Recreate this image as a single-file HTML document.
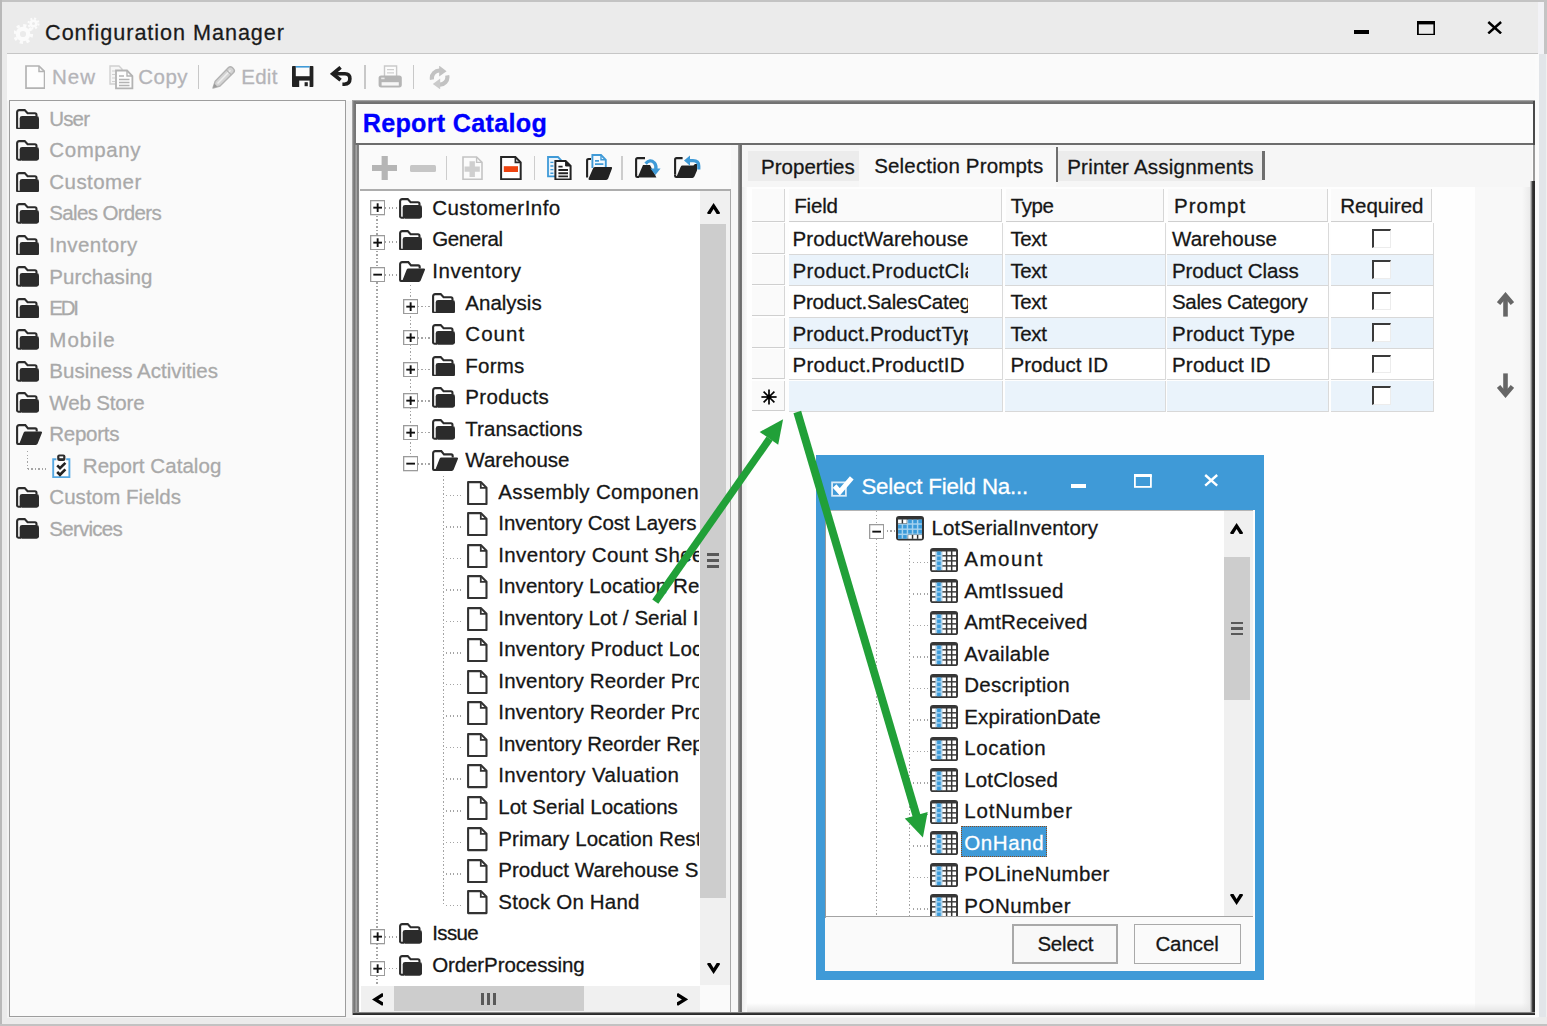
<!DOCTYPE html>
<html lang="en"><head><meta charset="utf-8"><title>Configuration Manager</title>
<style>
html,body{margin:0;padding:0}
body{width:1547px;height:1026px;overflow:hidden;position:relative;background:#ebebeb;font-family:"Liberation Sans",sans-serif}
.a{position:absolute;display:block}
.t{position:absolute;white-space:pre;display:block;-webkit-text-stroke:0.28px currentColor}
</style></head><body>
<div class="a" style="left:0.00px;top:0.00px;width:1547.00px;height:1.60px;background:#c3c3c3;"></div><div class="a" style="left:0.00px;top:0.00px;width:1.60px;height:1026.00px;background:#b9b9b9;"></div><div class="a" style="left:0.00px;top:1024.00px;width:1547.00px;height:2.00px;background:#c2c2c2;"></div><div class="a" style="left:1538.00px;top:1.60px;width:5.50px;height:52.00px;background:#f2f2f6;"></div><div class="a" style="left:1543.50px;top:0.00px;width:3.50px;height:54.00px;background:#c4c4c4;"></div><div class="a" style="left:7.00px;top:54.00px;width:1531.00px;height:46.50px;background:#fafafa;"></div><div class="a" style="left:7.00px;top:100.50px;width:1531.00px;height:917.00px;background:#f3f3f3;"></div><div class="a" style="left:1539.20px;top:54.00px;width:6.40px;height:962.80px;background:#e2e5e9;"></div><div class="a" style="left:1545.60px;top:54.00px;width:1.40px;height:963.00px;background:#f0f0f0;"></div><div class="a" style="left:1534.60px;top:54.00px;width:4.60px;height:963.00px;background:#fbfbfb;"></div><div class="a" style="left:7.00px;top:52.60px;width:1531.00px;height:1.50px;background:#c6c6c6;"></div><svg class="a" style="left:14.20px;top:16.60px;" width="28.00" height="30.00" viewBox="0 0 28 30"><g fill="none" stroke="#fbfbfb"><circle cx="9" cy="17" r="5.2" stroke-width="4.2"/><circle cx="9" cy="17" r="8.6" stroke-width="3" stroke-dasharray="3.2 3.55"/><circle cx="19.5" cy="6.5" r="2.8" stroke-width="2.6"/><circle cx="19.5" cy="6.5" r="5" stroke-width="2" stroke-dasharray="2 1.93"/></g></svg><span class="t" style="left:45.10px;top:22.22px;font-size:21.6px;line-height:21.6px;color:#1a1a1a;letter-spacing:0.961px;">Configuration Manager</span><div class="a" style="left:1354.00px;top:29.60px;width:14.60px;height:4.00px;background:#000;"></div><svg class="a" style="left:1417.00px;top:20.60px;" width="18.20" height="14.60" viewBox="0 0 18.2 14.6"><rect x="0.9" y="2" width="16.4" height="11.7" fill="none" stroke="#000" stroke-width="1.8"/><rect x="0" y="0" width="18.2" height="3.4" fill="#000"/></svg><svg class="a" style="left:1487.00px;top:20.50px;" width="15.40" height="13.40" viewBox="0 0 15.4 13.4"><path d="M1.3 1L14.1 12.4M14.1 1L1.3 12.4" stroke="#000" stroke-width="2.5" fill="none"/></svg><svg class="a" style="left:24.50px;top:64.60px;" width="20.60" height="24.20" viewBox="0 0 20.6 24.2"><path d="M1 1H14L19.6 6.6V23.2H1Z" fill="#fdfdfd" stroke="#b3b3b3" stroke-width="1.7"/><path d="M14 1V6.6H19.6" fill="none" stroke="#b3b3b3" stroke-width="1.5"/></svg><span class="t" style="left:51.90px;top:66.95px;font-size:20.5px;line-height:20.5px;color:#b4b4b8;letter-spacing:1.042px;">New</span><svg class="a" style="left:109.40px;top:65.20px;" width="24.60" height="24.60" viewBox="0 0 24.6 24.6"><path d="M1 1H10L13 4V19H1Z" fill="#f6f6f6" stroke="#d0d0d0" stroke-width="1.4"/><path d="M3 6H6M3 9.5H6M3 13H6M3 16.5H6" stroke="#d0d0d0" stroke-width="1.2"/><path d="M7 5.5H18L23.4 11V23.3H7Z" fill="#fdfdfd" stroke="#b3b3b3" stroke-width="1.8"/><path d="M18 5.5V11H23.4" fill="none" stroke="#b3b3b3" stroke-width="1.4"/><path d="M10 11H15M10 14.5H20.5M10 17.5H20.5M10 20.5H20.5" stroke="#b3b3b3" stroke-width="1.7"/></svg><span class="t" style="left:138.20px;top:66.95px;font-size:20.5px;line-height:20.5px;color:#b4b4b8;letter-spacing:0.514px;">Copy</span><div class="a" style="left:197.80px;top:64.50px;width:1.30px;height:24.30px;background:#c8c8c8;"></div><svg class="a" style="left:210.50px;top:63.60px;" width="26.00" height="26.00" viewBox="0 0 26 26"><path d="M2 24L4.2 17.2L17.5 3.6Q19.3 1.8 21.3 3.6L22.6 4.9Q24.3 6.8 22.6 8.6L9 22Z" fill="#d4d4d4" stroke="#b3b3b3" stroke-width="1.4" stroke-linejoin="round"/><path d="M6.5 19.5L19.5 6.3" stroke="#eee" stroke-width="1.6"/><path d="M2 24L3.4 19.6L6.4 22.6Z" fill="#9a9a9a"/><path d="M15.3 5.8L20.4 10.9" stroke="#b3b3b3" stroke-width="1.2"/></svg><span class="t" style="left:241.20px;top:66.95px;font-size:20.5px;line-height:20.5px;color:#b4b4b8;letter-spacing:0.291px;">Edit</span><svg class="a" style="left:292.20px;top:66.40px;" width="21.40" height="21.00" viewBox="0 0 21.4 21"><rect x="0" y="0" width="21.4" height="21" rx="0.8" fill="#222"/><rect x="3.8" y="0" width="13.8" height="10.2" fill="#fbfbfb"/><rect x="3.8" y="0" width="13.8" height="1.6" fill="#3f9ad7"/><rect x="7.2" y="14.6" width="10.4" height="6.6" fill="#fbfbfb"/><rect x="12.6" y="16.2" width="3.2" height="4" fill="#222"/></svg><svg class="a" style="left:330.40px;top:66.20px;" width="22.40" height="20.40" viewBox="0 0 22.4 20.4"><path d="M10.6 1.4L2.8 7.8L10.6 14.2" fill="none" stroke="#1e1e1e" stroke-width="3.7" stroke-linejoin="miter"/><path d="M4 7.8H15Q19.9 7.8 19.9 12.8Q19.9 18.2 14.4 18.2H12.4" fill="none" stroke="#1e1e1e" stroke-width="3.6"/></svg><div class="a" style="left:364.30px;top:64.80px;width:1.30px;height:24.00px;background:#c8c8c8;"></div><svg class="a" style="left:378.00px;top:64.60px;" width="24.40" height="23.00" viewBox="0 0 24.4 23"><path d="M6.5 11V1H18.6V11" fill="#fcfcfc" stroke="#c9c9c9" stroke-width="1.4"/><path d="M9 4.6H16M9 7.8H16" stroke="#cfcfcf" stroke-width="1.3"/><rect x="0.6" y="10.4" width="23.2" height="12" rx="2.6" fill="#b5b5b5"/><rect x="3.6" y="17.2" width="17.2" height="3.4" fill="#f6f6f6"/><rect x="3.2" y="12.6" width="3.4" height="1.6" fill="#e8e8e8"/></svg><div class="a" style="left:413.20px;top:64.80px;width:1.30px;height:24.00px;background:#c8c8c8;"></div><svg class="a" style="left:428.60px;top:66.20px;" width="21.40" height="22.60" viewBox="0 0 21.4 22.6"><g fill="none" stroke="#c2c2c2" stroke-width="4.2"><path d="M3 13.6A7.6 7.6 0 0 1 11.6 4.6"/><path d="M18.2 9.4A7.6 7.6 0 0 1 9.6 18.6"/></g><path d="M10.2 -0.4L17.6 5.2L10.2 10.6Z" fill="#c2c2c2"/><path d="M11.2 12.6L3.8 18L11.2 23.4Z" fill="#cbcbcb"/></svg><div class="a" style="left:9.30px;top:100.00px;width:336.50px;height:917.00px;background:#fafafa;box-sizing:border-box;border:1.5px solid #9d9d9d;"></div><svg class="a" style="left:16.00px;top:108.50px;" width="23.20" height="20.80" viewBox="0 0 23.2 20.8"><path d="M1.1 18.4V3.3Q1.1 1.1 3.3 1.1H8.7L11.6 4.3H18.9Q20.5 4.3 20.5 5.9V7" fill="none" stroke="#2b2b2b" stroke-width="2.1"/><path d="M1.1 18V18.6Q1.1 19.7 2.4 19.7H5" fill="none" stroke="#2b2b2b" stroke-width="2.1"/><rect x="3.7" y="7.1" width="19.3" height="13.6" rx="2.4" fill="#2b2b2b"/></svg><span class="t" style="left:49.30px;top:108.85px;font-size:20.5px;line-height:20.5px;color:#a9a9a9;letter-spacing:-0.866px;">User</span><svg class="a" style="left:16.00px;top:140.03px;" width="23.20" height="20.80" viewBox="0 0 23.2 20.8"><path d="M1.1 18.4V3.3Q1.1 1.1 3.3 1.1H8.7L11.6 4.3H18.9Q20.5 4.3 20.5 5.9V7" fill="none" stroke="#2b2b2b" stroke-width="2.1"/><path d="M1.1 18V18.6Q1.1 19.7 2.4 19.7H5" fill="none" stroke="#2b2b2b" stroke-width="2.1"/><rect x="3.7" y="7.1" width="19.3" height="13.6" rx="2.4" fill="#2b2b2b"/></svg><span class="t" style="left:49.30px;top:140.38px;font-size:20.5px;line-height:20.5px;color:#a9a9a9;letter-spacing:0.592px;">Company</span><svg class="a" style="left:16.00px;top:171.56px;" width="23.20" height="20.80" viewBox="0 0 23.2 20.8"><path d="M1.1 18.4V3.3Q1.1 1.1 3.3 1.1H8.7L11.6 4.3H18.9Q20.5 4.3 20.5 5.9V7" fill="none" stroke="#2b2b2b" stroke-width="2.1"/><path d="M1.1 18V18.6Q1.1 19.7 2.4 19.7H5" fill="none" stroke="#2b2b2b" stroke-width="2.1"/><rect x="3.7" y="7.1" width="19.3" height="13.6" rx="2.4" fill="#2b2b2b"/></svg><span class="t" style="left:49.30px;top:171.91px;font-size:20.5px;line-height:20.5px;color:#a9a9a9;letter-spacing:0.449px;">Customer</span><svg class="a" style="left:16.00px;top:203.09px;" width="23.20" height="20.80" viewBox="0 0 23.2 20.8"><path d="M1.1 18.4V3.3Q1.1 1.1 3.3 1.1H8.7L11.6 4.3H18.9Q20.5 4.3 20.5 5.9V7" fill="none" stroke="#2b2b2b" stroke-width="2.1"/><path d="M1.1 18V18.6Q1.1 19.7 2.4 19.7H5" fill="none" stroke="#2b2b2b" stroke-width="2.1"/><rect x="3.7" y="7.1" width="19.3" height="13.6" rx="2.4" fill="#2b2b2b"/></svg><span class="t" style="left:49.30px;top:203.44px;font-size:20.5px;line-height:20.5px;color:#a9a9a9;letter-spacing:-0.649px;">Sales Orders</span><svg class="a" style="left:16.00px;top:234.62px;" width="23.20" height="20.80" viewBox="0 0 23.2 20.8"><path d="M1.1 18.4V3.3Q1.1 1.1 3.3 1.1H8.7L11.6 4.3H18.9Q20.5 4.3 20.5 5.9V7" fill="none" stroke="#2b2b2b" stroke-width="2.1"/><path d="M1.1 18V18.6Q1.1 19.7 2.4 19.7H5" fill="none" stroke="#2b2b2b" stroke-width="2.1"/><rect x="3.7" y="7.1" width="19.3" height="13.6" rx="2.4" fill="#2b2b2b"/></svg><span class="t" style="left:49.30px;top:234.97px;font-size:20.5px;line-height:20.5px;color:#a9a9a9;letter-spacing:0.446px;">Inventory</span><svg class="a" style="left:16.00px;top:266.15px;" width="23.20" height="20.80" viewBox="0 0 23.2 20.8"><path d="M1.1 18.4V3.3Q1.1 1.1 3.3 1.1H8.7L11.6 4.3H18.9Q20.5 4.3 20.5 5.9V7" fill="none" stroke="#2b2b2b" stroke-width="2.1"/><path d="M1.1 18V18.6Q1.1 19.7 2.4 19.7H5" fill="none" stroke="#2b2b2b" stroke-width="2.1"/><rect x="3.7" y="7.1" width="19.3" height="13.6" rx="2.4" fill="#2b2b2b"/></svg><span class="t" style="left:49.30px;top:266.50px;font-size:20.5px;line-height:20.5px;color:#a9a9a9;letter-spacing:0.060px;">Purchasing</span><svg class="a" style="left:16.00px;top:297.68px;" width="23.20" height="20.80" viewBox="0 0 23.2 20.8"><path d="M1.1 18.4V3.3Q1.1 1.1 3.3 1.1H8.7L11.6 4.3H18.9Q20.5 4.3 20.5 5.9V7" fill="none" stroke="#2b2b2b" stroke-width="2.1"/><path d="M1.1 18V18.6Q1.1 19.7 2.4 19.7H5" fill="none" stroke="#2b2b2b" stroke-width="2.1"/><rect x="3.7" y="7.1" width="19.3" height="13.6" rx="2.4" fill="#2b2b2b"/></svg><span class="t" style="left:49.30px;top:298.03px;font-size:20.5px;line-height:20.5px;color:#a9a9a9;letter-spacing:-2.244px;">EDI</span><svg class="a" style="left:16.00px;top:329.21px;" width="23.20" height="20.80" viewBox="0 0 23.2 20.8"><path d="M1.1 18.4V3.3Q1.1 1.1 3.3 1.1H8.7L11.6 4.3H18.9Q20.5 4.3 20.5 5.9V7" fill="none" stroke="#2b2b2b" stroke-width="2.1"/><path d="M1.1 18V18.6Q1.1 19.7 2.4 19.7H5" fill="none" stroke="#2b2b2b" stroke-width="2.1"/><rect x="3.7" y="7.1" width="19.3" height="13.6" rx="2.4" fill="#2b2b2b"/></svg><span class="t" style="left:49.30px;top:329.56px;font-size:20.5px;line-height:20.5px;color:#a9a9a9;letter-spacing:1.002px;">Mobile</span><svg class="a" style="left:16.00px;top:360.74px;" width="23.20" height="20.80" viewBox="0 0 23.2 20.8"><path d="M1.1 18.4V3.3Q1.1 1.1 3.3 1.1H8.7L11.6 4.3H18.9Q20.5 4.3 20.5 5.9V7" fill="none" stroke="#2b2b2b" stroke-width="2.1"/><path d="M1.1 18V18.6Q1.1 19.7 2.4 19.7H5" fill="none" stroke="#2b2b2b" stroke-width="2.1"/><rect x="3.7" y="7.1" width="19.3" height="13.6" rx="2.4" fill="#2b2b2b"/></svg><span class="t" style="left:49.30px;top:361.09px;font-size:20.5px;line-height:20.5px;color:#a9a9a9;letter-spacing:0.004px;">Business Activities</span><svg class="a" style="left:16.00px;top:392.27px;" width="23.20" height="20.80" viewBox="0 0 23.2 20.8"><path d="M1.1 18.4V3.3Q1.1 1.1 3.3 1.1H8.7L11.6 4.3H18.9Q20.5 4.3 20.5 5.9V7" fill="none" stroke="#2b2b2b" stroke-width="2.1"/><path d="M1.1 18V18.6Q1.1 19.7 2.4 19.7H5" fill="none" stroke="#2b2b2b" stroke-width="2.1"/><rect x="3.7" y="7.1" width="19.3" height="13.6" rx="2.4" fill="#2b2b2b"/></svg><span class="t" style="left:49.30px;top:392.62px;font-size:20.5px;line-height:20.5px;color:#a9a9a9;letter-spacing:-0.148px;">Web Store</span><svg class="a" style="left:16.00px;top:423.70px;" width="26.40" height="21.20" viewBox="0 0 26.4 21.2"><path d="M1.1 18.6V3.3Q1.1 1.1 3.3 1.1H9.3L12 4.4H19.2Q20.7 4.4 20.7 6V7.4" fill="none" stroke="#2b2b2b" stroke-width="2.1"/><path d="M1.1 18V18.9Q1.1 20 2.4 20H5" fill="none" stroke="#2b2b2b" stroke-width="2.1"/><path d="M9.3 7.5H25Q26.4 7.5 25.9 8.9L21.7 19.6Q21.2 21 19.7 21H4.2Q2.8 21 3.4 19.6L7.6 8.8Q8.1 7.5 9.3 7.5Z" fill="#2b2b2b"/></svg><span class="t" style="left:49.30px;top:424.15px;font-size:20.5px;line-height:20.5px;color:#a9a9a9;letter-spacing:-0.280px;">Reports</span><div class="a" style="left:26.75px;top:451.00px;width:1.50px;height:17.83px;background-image:repeating-linear-gradient(to bottom,#a4a4a4 0,#a4a4a4 1.4px,transparent 1.4px,transparent 3.5px);"></div><div class="a" style="left:27.50px;top:468.08px;width:18.00px;height:1.50px;background-image:repeating-linear-gradient(to right,#a4a4a4 0,#a4a4a4 1.4px,transparent 1.4px,transparent 3.5px);"></div><svg class="a" style="left:52.00px;top:454.00px;" width="18.60" height="24.40" viewBox="0 0 18.6 24.4"><path d="M4.4 5.2H1.2V23.2H17.4V5.2H14.2" fill="#fdfdfd" stroke="#55a8e2" stroke-width="1.9"/><rect x="5.2" y="0.6" width="8.2" height="6.4" rx="2" fill="#2b2b2b"/><rect x="7.4" y="2.4" width="3.8" height="1.8" fill="#fff"/><path d="M5.2 11.4L8 14.2L13.4 8.8" fill="none" stroke="#222" stroke-width="2.6"/><path d="M5.2 18L8 20.8L13.4 15.4" fill="none" stroke="#222" stroke-width="2.6"/></svg><span class="t" style="left:82.80px;top:455.68px;font-size:20.5px;line-height:20.5px;color:#a9a9a9;letter-spacing:0.047px;">Report Catalog</span><svg class="a" style="left:16.00px;top:486.86px;" width="23.20" height="20.80" viewBox="0 0 23.2 20.8"><path d="M1.1 18.4V3.3Q1.1 1.1 3.3 1.1H8.7L11.6 4.3H18.9Q20.5 4.3 20.5 5.9V7" fill="none" stroke="#2b2b2b" stroke-width="2.1"/><path d="M1.1 18V18.6Q1.1 19.7 2.4 19.7H5" fill="none" stroke="#2b2b2b" stroke-width="2.1"/><rect x="3.7" y="7.1" width="19.3" height="13.6" rx="2.4" fill="#2b2b2b"/></svg><span class="t" style="left:49.30px;top:487.21px;font-size:20.5px;line-height:20.5px;color:#a9a9a9;letter-spacing:0.057px;">Custom Fields</span><svg class="a" style="left:16.00px;top:518.39px;" width="23.20" height="20.80" viewBox="0 0 23.2 20.8"><path d="M1.1 18.4V3.3Q1.1 1.1 3.3 1.1H8.7L11.6 4.3H18.9Q20.5 4.3 20.5 5.9V7" fill="none" stroke="#2b2b2b" stroke-width="2.1"/><path d="M1.1 18V18.6Q1.1 19.7 2.4 19.7H5" fill="none" stroke="#2b2b2b" stroke-width="2.1"/><rect x="3.7" y="7.1" width="19.3" height="13.6" rx="2.4" fill="#2b2b2b"/></svg><span class="t" style="left:49.30px;top:518.74px;font-size:20.5px;line-height:20.5px;color:#a9a9a9;letter-spacing:-0.730px;">Services</span><div class="a" style="left:352.80px;top:100.80px;width:1181.80px;height:914.30px;background:#fbfbfb;"></div><span class="t" style="left:362.70px;top:111.17px;font-size:25.2px;line-height:25.2px;color:#0000fe;letter-spacing:0.275px;font-weight:bold;">Report Catalog</span><div class="a" style="left:356.00px;top:145.00px;width:1176.00px;height:867.30px;background:#f6f6f6;"></div><div class="a" style="left:359.50px;top:145.00px;width:371.50px;height:44.50px;background:#fafafa;"></div><div class="a" style="left:745.00px;top:187.00px;width:730.00px;height:825.30px;background:#fefefe;"></div><div class="a" style="left:1475.00px;top:187.00px;width:55.50px;height:825.30px;background:#f8f8f8;"></div><div class="a" style="left:1522.00px;top:187.00px;width:8.50px;height:825.30px;background:linear-gradient(to right,#f8f8f8,#e9e9e9);"></div><div class="a" style="left:745.00px;top:1003.00px;width:785.00px;height:9.40px;background:linear-gradient(to bottom,rgba(235,235,235,0),#e6e6e6);"></div><div class="a" style="left:352.40px;top:100.40px;width:1182.20px;height:3.30px;background:linear-gradient(to bottom,#b4b4b4 0,#757575 45%,#707070 100%);"></div><div class="a" style="left:352.40px;top:100.80px;width:3.20px;height:914.30px;background:linear-gradient(to right,#b4b4b4 0,#7a7a7a 45%,#747474 100%);"></div><div class="a" style="left:1529.60px;top:181.00px;width:5.10px;height:834.10px;background:linear-gradient(to right,#e4e4e4 0,#8a8a8a 30%,#2e2e2e 55%,#2a2a2a 100%);"></div><div class="a" style="left:1532.80px;top:100.80px;width:1.80px;height:44.00px;background:#4a4a4a;"></div><div class="a" style="left:1533.00px;top:145.00px;width:1.60px;height:36.00px;background:#9a9a9a;"></div><div class="a" style="left:352.80px;top:1012.00px;width:1181.80px;height:3.10px;background:linear-gradient(to bottom,#c0c0c0 0,#4a4a4a 35%,#2a2a2a 60%,#2a2a2a 100%);"></div><div class="a" style="left:352.80px;top:1015.10px;width:1186.30px;height:1.70px;background:#fbfbfb;"></div><div class="a" style="left:355.70px;top:142.60px;width:1177.00px;height:2.50px;background:#6c6c6c;"></div><div class="a" style="left:355.40px;top:145.00px;width:3.90px;height:867.30px;background:linear-gradient(to right,#8a8a8a,#a6a6a6 40%,#7c7c7c 60%,#868686);"></div><svg class="a" style="left:372.00px;top:156.00px;" width="25.40" height="24.00" viewBox="0 0 25.4 24"><path d="M12.7 0V24M0 12H25.4" stroke="#b5b5b5" stroke-width="6.2"/></svg><div class="a" style="left:410.00px;top:165.00px;width:25.80px;height:6.80px;background:#c6c6c6;border-radius:1.5px;"></div><div class="a" style="left:446.20px;top:155.60px;width:1.30px;height:24.40px;background:#cdcdcd;"></div><svg class="a" style="left:462.00px;top:155.80px;" width="21.00" height="24.40" viewBox="0 0 21 24.4"><path d="M1 1H14.6L20 6.4V23.4H1Z" fill="#fbfbfb" stroke="#c4c4c4" stroke-width="1.6"/><path d="M14.6 1V6.4H20" fill="none" stroke="#c4c4c4" stroke-width="1.4"/><path d="M10.2 5.2V21M2.6 13.1H17.8" stroke="#cfcfcf" stroke-width="5.4"/></svg><svg class="a" style="left:500.00px;top:155.80px;" width="21.80" height="24.40" viewBox="0 0 21.8 24.4"><path d="M1.1 1.1H15.4L20.7 6.4V23.3H1.1Z" fill="#fff" stroke="#262626" stroke-width="2"/><path d="M15.4 1.1V6.4H20.7" fill="none" stroke="#262626" stroke-width="1.7"/><rect x="3.8" y="10.2" width="14.2" height="5.8" fill="#ee4310"/></svg><div class="a" style="left:533.80px;top:155.60px;width:1.30px;height:24.40px;background:#cdcdcd;"></div><svg class="a" style="left:547.40px;top:155.60px;" width="24.80" height="24.60" viewBox="0 0 24.8 24.6"><path d="M1 1H11L14 4V20.4H1Z" fill="#eaf4fc" stroke="#3f9ad7" stroke-width="1.8"/><path d="M3.4 6.4H6.4M3.4 10H6.4M3.4 13.6H6.4M3.4 17.2H6.4" stroke="#3f9ad7" stroke-width="1.4"/><path d="M8.4 5H18.6L23.6 10V23.4H8.4Z" fill="#fff" stroke="#222" stroke-width="2"/><path d="M18.6 5V10H23.6" fill="#222" stroke="#222" stroke-width="1"/><path d="M11.4 10.6H15.6M11.4 14H21M11.4 17.2H21M11.4 20.4H21" stroke="#222" stroke-width="1.9"/></svg><svg class="a" style="left:586.00px;top:153.80px;" width="26.60" height="26.20" viewBox="0 0 26.6 26.2"><path d="M6.4 14V1H15L19.8 5.8V14" fill="#f4f9fd" stroke="#3f9ad7" stroke-width="1.9"/><path d="M15 1V5.8H19.8" fill="none" stroke="#3f9ad7" stroke-width="1.4"/><path d="M9 6.8H13M9 10.2H17.4" stroke="#3f9ad7" stroke-width="1.7"/><path d="M1.1 23.4V6.4Q1.1 5 2.6 5H5" fill="none" stroke="#222" stroke-width="2.1"/><path d="M9.4 13H25Q26.6 13 26 14.4L22.2 24.6Q21.6 26 20.2 26H3.6Q2 26 2.6 24.6L7 14.4Q7.6 13 9.4 13Z" fill="#222"/></svg><div class="a" style="left:621.30px;top:155.60px;width:1.30px;height:24.40px;background:#cdcdcd;"></div><svg class="a" style="left:635.00px;top:157.40px;" width="25.80" height="21.20" viewBox="0 0 25.8 21.2"><path d="M1.1 18V2.6Q1.1 1.1 2.6 1.1H10" fill="none" stroke="#222" stroke-width="2.1"/><path d="M1.1 17.6V19Q1.1 20 2.2 20H4" fill="none" stroke="#222" stroke-width="2.1"/><path d="M8 8H15L21.4 20.6H2.6Z" fill="#222"/><path d="M10.6 6.6Q15 1.6 19.4 5.8Q21.6 8.6 20.8 13" fill="none" stroke="#3f9ad7" stroke-width="3.2"/><path d="M15.4 11.4H25.6L20.4 18Z" fill="#3f9ad7"/></svg><svg class="a" style="left:674.00px;top:155.40px;" width="26.60" height="23.40" viewBox="0 0 26.6 23.4"><path d="M1.1 19.6V4.6Q1.1 3.1 2.6 3.1H8.6" fill="none" stroke="#222" stroke-width="2.1"/><path d="M1.1 19.4V21Q1.1 22 2.2 22H4" fill="none" stroke="#222" stroke-width="2.1"/><path d="M8.6 10.6H19.4L21 9H23V15.6L20.4 21.6Q19.8 23 18.4 23H3.4Q2 23 2.6 21.6L6.6 12Q7.2 10.6 8.6 10.6Z" fill="#222"/><path d="M14 5.6H19Q24.8 5.6 24.8 11V14.4" fill="none" stroke="#3f9ad7" stroke-width="3.2"/><path d="M16 0.4V10.8L10 5.6Z" fill="#3f9ad7"/></svg><div class="a" style="left:359.50px;top:189.30px;width:371.70px;height:823.00px;background:#fff;"></div><div class="a" style="left:359.50px;top:189.30px;width:371.70px;height:1.70px;background:#adadad;"></div><div class="a" style="left:729.70px;top:189.30px;width:1.50px;height:823.00px;background:#a8a8a8;"></div><div class="a" style="left:376.35px;top:215.60px;width:1.50px;height:770.40px;background-image:repeating-linear-gradient(to bottom,#a4a4a4 0,#a4a4a4 1.4px,transparent 1.4px,transparent 3.5px);"></div><div class="a" style="left:409.65px;top:284.50px;width:1.50px;height:171.84px;background-image:repeating-linear-gradient(to bottom,#a4a4a4 0,#a4a4a4 1.4px,transparent 1.4px,transparent 3.5px);"></div><div class="a" style="left:442.75px;top:475.50px;width:1.50px;height:430.66px;background-image:repeating-linear-gradient(to bottom,#a4a4a4 0,#a4a4a4 1.4px,transparent 1.4px,transparent 3.5px);"></div><div class="a" style="left:385.20px;top:207.15px;width:11.90px;height:1.50px;background-image:repeating-linear-gradient(to right,#a4a4a4 0,#a4a4a4 1.4px,transparent 1.4px,transparent 3.5px);"></div><svg class="a" style="left:369.60px;top:200.25px;" width="15.30" height="15.30" viewBox="0 0 15.3 15.3"><rect x="0.65" y="0.65" width="14" height="14" fill="#fff" stroke="#9b9b9b" stroke-width="1.3"/><path d="M3.3 7.65H12" stroke="#111" stroke-width="1.9"/><path d="M7.65 3.3V12" stroke="#111" stroke-width="1.9"/></svg><svg class="a" style="left:398.80px;top:198.00px;" width="23.20" height="20.80" viewBox="0 0 23.2 20.8"><path d="M1.1 18.4V3.3Q1.1 1.1 3.3 1.1H8.7L11.6 4.3H18.9Q20.5 4.3 20.5 5.9V7" fill="none" stroke="#2b2b2b" stroke-width="2.1"/><path d="M1.1 18V18.6Q1.1 19.7 2.4 19.7H5" fill="none" stroke="#2b2b2b" stroke-width="2.1"/><rect x="3.7" y="7.1" width="19.3" height="13.6" rx="2.4" fill="#2b2b2b"/></svg><span class="t" style="left:432.20px;top:197.95px;font-size:20.5px;line-height:20.5px;color:#161616;letter-spacing:0.449px;width:266.80px;overflow:hidden;height:26.7px;">CustomerInfo</span><div class="a" style="left:385.20px;top:241.48px;width:11.90px;height:1.50px;background-image:repeating-linear-gradient(to right,#a4a4a4 0,#a4a4a4 1.4px,transparent 1.4px,transparent 3.5px);"></div><svg class="a" style="left:369.60px;top:234.58px;" width="15.30" height="15.30" viewBox="0 0 15.3 15.3"><rect x="0.65" y="0.65" width="14" height="14" fill="#fff" stroke="#9b9b9b" stroke-width="1.3"/><path d="M3.3 7.65H12" stroke="#111" stroke-width="1.9"/><path d="M7.65 3.3V12" stroke="#111" stroke-width="1.9"/></svg><svg class="a" style="left:398.80px;top:229.53px;" width="23.20" height="20.80" viewBox="0 0 23.2 20.8"><path d="M1.1 18.4V3.3Q1.1 1.1 3.3 1.1H8.7L11.6 4.3H18.9Q20.5 4.3 20.5 5.9V7" fill="none" stroke="#2b2b2b" stroke-width="2.1"/><path d="M1.1 18V18.6Q1.1 19.7 2.4 19.7H5" fill="none" stroke="#2b2b2b" stroke-width="2.1"/><rect x="3.7" y="7.1" width="19.3" height="13.6" rx="2.4" fill="#2b2b2b"/></svg><span class="t" style="left:432.20px;top:229.48px;font-size:20.5px;line-height:20.5px;color:#161616;letter-spacing:-0.356px;width:266.80px;overflow:hidden;height:26.7px;">General</span><div class="a" style="left:385.20px;top:274.01px;width:11.90px;height:1.50px;background-image:repeating-linear-gradient(to right,#a4a4a4 0,#a4a4a4 1.4px,transparent 1.4px,transparent 3.5px);"></div><svg class="a" style="left:369.60px;top:267.11px;" width="15.30" height="15.30" viewBox="0 0 15.3 15.3"><rect x="0.65" y="0.65" width="14" height="14" fill="#fff" stroke="#9b9b9b" stroke-width="1.3"/><path d="M3.3 7.65H12" stroke="#111" stroke-width="1.9"/></svg><svg class="a" style="left:398.80px;top:260.86px;" width="26.40" height="21.20" viewBox="0 0 26.4 21.2"><path d="M1.1 18.6V3.3Q1.1 1.1 3.3 1.1H9.3L12 4.4H19.2Q20.7 4.4 20.7 6V7.4" fill="none" stroke="#2b2b2b" stroke-width="2.1"/><path d="M1.1 18V18.9Q1.1 20 2.4 20H5" fill="none" stroke="#2b2b2b" stroke-width="2.1"/><path d="M9.3 7.5H25Q26.4 7.5 25.9 8.9L21.7 19.6Q21.2 21 19.7 21H4.2Q2.8 21 3.4 19.6L7.6 8.8Q8.1 7.5 9.3 7.5Z" fill="#2b2b2b"/></svg><span class="t" style="left:432.20px;top:261.01px;font-size:20.5px;line-height:20.5px;color:#161616;letter-spacing:0.546px;width:266.80px;overflow:hidden;height:26.7px;">Inventory</span><div class="a" style="left:418.30px;top:305.54px;width:11.90px;height:1.50px;background-image:repeating-linear-gradient(to right,#a4a4a4 0,#a4a4a4 1.4px,transparent 1.4px,transparent 3.5px);"></div><svg class="a" style="left:402.70px;top:298.64px;" width="15.30" height="15.30" viewBox="0 0 15.3 15.3"><rect x="0.65" y="0.65" width="14" height="14" fill="#fff" stroke="#9b9b9b" stroke-width="1.3"/><path d="M3.3 7.65H12" stroke="#111" stroke-width="1.9"/><path d="M7.65 3.3V12" stroke="#111" stroke-width="1.9"/></svg><svg class="a" style="left:431.90px;top:292.59px;" width="23.20" height="20.80" viewBox="0 0 23.2 20.8"><path d="M1.1 18.4V3.3Q1.1 1.1 3.3 1.1H8.7L11.6 4.3H18.9Q20.5 4.3 20.5 5.9V7" fill="none" stroke="#2b2b2b" stroke-width="2.1"/><path d="M1.1 18V18.6Q1.1 19.7 2.4 19.7H5" fill="none" stroke="#2b2b2b" stroke-width="2.1"/><rect x="3.7" y="7.1" width="19.3" height="13.6" rx="2.4" fill="#2b2b2b"/></svg><span class="t" style="left:465.30px;top:292.54px;font-size:20.5px;line-height:20.5px;color:#161616;letter-spacing:0.008px;width:233.70px;overflow:hidden;height:26.7px;">Analysis</span><div class="a" style="left:418.30px;top:337.07px;width:11.90px;height:1.50px;background-image:repeating-linear-gradient(to right,#a4a4a4 0,#a4a4a4 1.4px,transparent 1.4px,transparent 3.5px);"></div><svg class="a" style="left:402.70px;top:330.17px;" width="15.30" height="15.30" viewBox="0 0 15.3 15.3"><rect x="0.65" y="0.65" width="14" height="14" fill="#fff" stroke="#9b9b9b" stroke-width="1.3"/><path d="M3.3 7.65H12" stroke="#111" stroke-width="1.9"/><path d="M7.65 3.3V12" stroke="#111" stroke-width="1.9"/></svg><svg class="a" style="left:431.90px;top:324.12px;" width="23.20" height="20.80" viewBox="0 0 23.2 20.8"><path d="M1.1 18.4V3.3Q1.1 1.1 3.3 1.1H8.7L11.6 4.3H18.9Q20.5 4.3 20.5 5.9V7" fill="none" stroke="#2b2b2b" stroke-width="2.1"/><path d="M1.1 18V18.6Q1.1 19.7 2.4 19.7H5" fill="none" stroke="#2b2b2b" stroke-width="2.1"/><rect x="3.7" y="7.1" width="19.3" height="13.6" rx="2.4" fill="#2b2b2b"/></svg><span class="t" style="left:465.30px;top:324.07px;font-size:20.5px;line-height:20.5px;color:#161616;letter-spacing:1.045px;width:233.70px;overflow:hidden;height:26.7px;">Count</span><div class="a" style="left:418.30px;top:368.60px;width:11.90px;height:1.50px;background-image:repeating-linear-gradient(to right,#a4a4a4 0,#a4a4a4 1.4px,transparent 1.4px,transparent 3.5px);"></div><svg class="a" style="left:402.70px;top:361.70px;" width="15.30" height="15.30" viewBox="0 0 15.3 15.3"><rect x="0.65" y="0.65" width="14" height="14" fill="#fff" stroke="#9b9b9b" stroke-width="1.3"/><path d="M3.3 7.65H12" stroke="#111" stroke-width="1.9"/><path d="M7.65 3.3V12" stroke="#111" stroke-width="1.9"/></svg><svg class="a" style="left:431.90px;top:355.65px;" width="23.20" height="20.80" viewBox="0 0 23.2 20.8"><path d="M1.1 18.4V3.3Q1.1 1.1 3.3 1.1H8.7L11.6 4.3H18.9Q20.5 4.3 20.5 5.9V7" fill="none" stroke="#2b2b2b" stroke-width="2.1"/><path d="M1.1 18V18.6Q1.1 19.7 2.4 19.7H5" fill="none" stroke="#2b2b2b" stroke-width="2.1"/><rect x="3.7" y="7.1" width="19.3" height="13.6" rx="2.4" fill="#2b2b2b"/></svg><span class="t" style="left:465.30px;top:355.60px;font-size:20.5px;line-height:20.5px;color:#161616;letter-spacing:0.205px;width:233.70px;overflow:hidden;height:26.7px;">Forms</span><div class="a" style="left:418.30px;top:400.13px;width:11.90px;height:1.50px;background-image:repeating-linear-gradient(to right,#a4a4a4 0,#a4a4a4 1.4px,transparent 1.4px,transparent 3.5px);"></div><svg class="a" style="left:402.70px;top:393.23px;" width="15.30" height="15.30" viewBox="0 0 15.3 15.3"><rect x="0.65" y="0.65" width="14" height="14" fill="#fff" stroke="#9b9b9b" stroke-width="1.3"/><path d="M3.3 7.65H12" stroke="#111" stroke-width="1.9"/><path d="M7.65 3.3V12" stroke="#111" stroke-width="1.9"/></svg><svg class="a" style="left:431.90px;top:387.18px;" width="23.20" height="20.80" viewBox="0 0 23.2 20.8"><path d="M1.1 18.4V3.3Q1.1 1.1 3.3 1.1H8.7L11.6 4.3H18.9Q20.5 4.3 20.5 5.9V7" fill="none" stroke="#2b2b2b" stroke-width="2.1"/><path d="M1.1 18V18.6Q1.1 19.7 2.4 19.7H5" fill="none" stroke="#2b2b2b" stroke-width="2.1"/><rect x="3.7" y="7.1" width="19.3" height="13.6" rx="2.4" fill="#2b2b2b"/></svg><span class="t" style="left:465.30px;top:387.13px;font-size:20.5px;line-height:20.5px;color:#161616;letter-spacing:0.371px;width:233.70px;overflow:hidden;height:26.7px;">Products</span><div class="a" style="left:418.30px;top:431.66px;width:11.90px;height:1.50px;background-image:repeating-linear-gradient(to right,#a4a4a4 0,#a4a4a4 1.4px,transparent 1.4px,transparent 3.5px);"></div><svg class="a" style="left:402.70px;top:424.76px;" width="15.30" height="15.30" viewBox="0 0 15.3 15.3"><rect x="0.65" y="0.65" width="14" height="14" fill="#fff" stroke="#9b9b9b" stroke-width="1.3"/><path d="M3.3 7.65H12" stroke="#111" stroke-width="1.9"/><path d="M7.65 3.3V12" stroke="#111" stroke-width="1.9"/></svg><svg class="a" style="left:431.90px;top:418.71px;" width="23.20" height="20.80" viewBox="0 0 23.2 20.8"><path d="M1.1 18.4V3.3Q1.1 1.1 3.3 1.1H8.7L11.6 4.3H18.9Q20.5 4.3 20.5 5.9V7" fill="none" stroke="#2b2b2b" stroke-width="2.1"/><path d="M1.1 18V18.6Q1.1 19.7 2.4 19.7H5" fill="none" stroke="#2b2b2b" stroke-width="2.1"/><rect x="3.7" y="7.1" width="19.3" height="13.6" rx="2.4" fill="#2b2b2b"/></svg><span class="t" style="left:465.30px;top:418.66px;font-size:20.5px;line-height:20.5px;color:#161616;letter-spacing:0.046px;width:233.70px;overflow:hidden;height:26.7px;">Transactions</span><div class="a" style="left:418.30px;top:463.19px;width:11.90px;height:1.50px;background-image:repeating-linear-gradient(to right,#a4a4a4 0,#a4a4a4 1.4px,transparent 1.4px,transparent 3.5px);"></div><svg class="a" style="left:402.70px;top:456.29px;" width="15.30" height="15.30" viewBox="0 0 15.3 15.3"><rect x="0.65" y="0.65" width="14" height="14" fill="#fff" stroke="#9b9b9b" stroke-width="1.3"/><path d="M3.3 7.65H12" stroke="#111" stroke-width="1.9"/></svg><svg class="a" style="left:431.90px;top:450.04px;" width="26.40" height="21.20" viewBox="0 0 26.4 21.2"><path d="M1.1 18.6V3.3Q1.1 1.1 3.3 1.1H9.3L12 4.4H19.2Q20.7 4.4 20.7 6V7.4" fill="none" stroke="#2b2b2b" stroke-width="2.1"/><path d="M1.1 18V18.9Q1.1 20 2.4 20H5" fill="none" stroke="#2b2b2b" stroke-width="2.1"/><path d="M9.3 7.5H25Q26.4 7.5 25.9 8.9L21.7 19.6Q21.2 21 19.7 21H4.2Q2.8 21 3.4 19.6L7.6 8.8Q8.1 7.5 9.3 7.5Z" fill="#2b2b2b"/></svg><span class="t" style="left:465.30px;top:450.19px;font-size:20.5px;line-height:20.5px;color:#161616;letter-spacing:0.015px;width:233.70px;overflow:hidden;height:26.7px;">Warehouse</span><div class="a" style="left:445.60px;top:494.72px;width:17.00px;height:1.50px;background-image:repeating-linear-gradient(to right,#a4a4a4 0,#a4a4a4 1.4px,transparent 1.4px,transparent 3.5px);"></div><svg class="a" style="left:467.40px;top:480.57px;" width="20.60" height="24.20" viewBox="0 0 20.6 24.2"><path d="M1.1 1.1H13.8L19.5 6.8V23.1H1.1Z" fill="#fff" stroke="#333" stroke-width="2.1" stroke-linejoin="round"/><path d="M13.8 1.1V6.8H19.5" fill="none" stroke="#333" stroke-width="1.8"/></svg><span class="t" style="left:498.30px;top:481.72px;font-size:20.5px;line-height:20.5px;color:#161616;letter-spacing:0.341px;width:200.70px;overflow:hidden;height:26.7px;">Assembly Componen</span><div class="a" style="left:445.60px;top:526.25px;width:17.00px;height:1.50px;background-image:repeating-linear-gradient(to right,#a4a4a4 0,#a4a4a4 1.4px,transparent 1.4px,transparent 3.5px);"></div><svg class="a" style="left:467.40px;top:512.10px;" width="20.60" height="24.20" viewBox="0 0 20.6 24.2"><path d="M1.1 1.1H13.8L19.5 6.8V23.1H1.1Z" fill="#fff" stroke="#333" stroke-width="2.1" stroke-linejoin="round"/><path d="M13.8 1.1V6.8H19.5" fill="none" stroke="#333" stroke-width="1.8"/></svg><span class="t" style="left:498.30px;top:513.25px;font-size:20.5px;line-height:20.5px;color:#161616;letter-spacing:-0.055px;width:200.70px;overflow:hidden;height:26.7px;">Inventory Cost Layers</span><div class="a" style="left:445.60px;top:557.78px;width:17.00px;height:1.50px;background-image:repeating-linear-gradient(to right,#a4a4a4 0,#a4a4a4 1.4px,transparent 1.4px,transparent 3.5px);"></div><svg class="a" style="left:467.40px;top:543.63px;" width="20.60" height="24.20" viewBox="0 0 20.6 24.2"><path d="M1.1 1.1H13.8L19.5 6.8V23.1H1.1Z" fill="#fff" stroke="#333" stroke-width="2.1" stroke-linejoin="round"/><path d="M13.8 1.1V6.8H19.5" fill="none" stroke="#333" stroke-width="1.8"/></svg><span class="t" style="left:498.30px;top:544.78px;font-size:20.5px;line-height:20.5px;color:#161616;letter-spacing:0.353px;width:200.70px;overflow:hidden;height:26.7px;">Inventory Count Shee</span><div class="a" style="left:445.60px;top:589.31px;width:17.00px;height:1.50px;background-image:repeating-linear-gradient(to right,#a4a4a4 0,#a4a4a4 1.4px,transparent 1.4px,transparent 3.5px);"></div><svg class="a" style="left:467.40px;top:575.16px;" width="20.60" height="24.20" viewBox="0 0 20.6 24.2"><path d="M1.1 1.1H13.8L19.5 6.8V23.1H1.1Z" fill="#fff" stroke="#333" stroke-width="2.1" stroke-linejoin="round"/><path d="M13.8 1.1V6.8H19.5" fill="none" stroke="#333" stroke-width="1.8"/></svg><span class="t" style="left:498.30px;top:576.31px;font-size:20.5px;line-height:20.5px;color:#161616;letter-spacing:0.078px;width:200.70px;overflow:hidden;height:26.7px;">Inventory Location Re</span><div class="a" style="left:445.60px;top:620.84px;width:17.00px;height:1.50px;background-image:repeating-linear-gradient(to right,#a4a4a4 0,#a4a4a4 1.4px,transparent 1.4px,transparent 3.5px);"></div><svg class="a" style="left:467.40px;top:606.69px;" width="20.60" height="24.20" viewBox="0 0 20.6 24.2"><path d="M1.1 1.1H13.8L19.5 6.8V23.1H1.1Z" fill="#fff" stroke="#333" stroke-width="2.1" stroke-linejoin="round"/><path d="M13.8 1.1V6.8H19.5" fill="none" stroke="#333" stroke-width="1.8"/></svg><span class="t" style="left:498.30px;top:607.84px;font-size:20.5px;line-height:20.5px;color:#161616;letter-spacing:0.030px;width:200.70px;overflow:hidden;height:26.7px;">Inventory Lot / Serial I</span><div class="a" style="left:445.60px;top:652.37px;width:17.00px;height:1.50px;background-image:repeating-linear-gradient(to right,#a4a4a4 0,#a4a4a4 1.4px,transparent 1.4px,transparent 3.5px);"></div><svg class="a" style="left:467.40px;top:638.22px;" width="20.60" height="24.20" viewBox="0 0 20.6 24.2"><path d="M1.1 1.1H13.8L19.5 6.8V23.1H1.1Z" fill="#fff" stroke="#333" stroke-width="2.1" stroke-linejoin="round"/><path d="M13.8 1.1V6.8H19.5" fill="none" stroke="#333" stroke-width="1.8"/></svg><span class="t" style="left:498.30px;top:639.37px;font-size:20.5px;line-height:20.5px;color:#161616;letter-spacing:0.229px;width:200.70px;overflow:hidden;height:26.7px;">Inventory Product Loc</span><div class="a" style="left:445.60px;top:683.90px;width:17.00px;height:1.50px;background-image:repeating-linear-gradient(to right,#a4a4a4 0,#a4a4a4 1.4px,transparent 1.4px,transparent 3.5px);"></div><svg class="a" style="left:467.40px;top:669.75px;" width="20.60" height="24.20" viewBox="0 0 20.6 24.2"><path d="M1.1 1.1H13.8L19.5 6.8V23.1H1.1Z" fill="#fff" stroke="#333" stroke-width="2.1" stroke-linejoin="round"/><path d="M13.8 1.1V6.8H19.5" fill="none" stroke="#333" stroke-width="1.8"/></svg><span class="t" style="left:498.30px;top:670.90px;font-size:20.5px;line-height:20.5px;color:#161616;letter-spacing:0.151px;width:200.70px;overflow:hidden;height:26.7px;">Inventory Reorder Pro</span><div class="a" style="left:445.60px;top:715.43px;width:17.00px;height:1.50px;background-image:repeating-linear-gradient(to right,#a4a4a4 0,#a4a4a4 1.4px,transparent 1.4px,transparent 3.5px);"></div><svg class="a" style="left:467.40px;top:701.28px;" width="20.60" height="24.20" viewBox="0 0 20.6 24.2"><path d="M1.1 1.1H13.8L19.5 6.8V23.1H1.1Z" fill="#fff" stroke="#333" stroke-width="2.1" stroke-linejoin="round"/><path d="M13.8 1.1V6.8H19.5" fill="none" stroke="#333" stroke-width="1.8"/></svg><span class="t" style="left:498.30px;top:702.43px;font-size:20.5px;line-height:20.5px;color:#161616;letter-spacing:0.151px;width:200.70px;overflow:hidden;height:26.7px;">Inventory Reorder Pro</span><div class="a" style="left:445.60px;top:746.96px;width:17.00px;height:1.50px;background-image:repeating-linear-gradient(to right,#a4a4a4 0,#a4a4a4 1.4px,transparent 1.4px,transparent 3.5px);"></div><svg class="a" style="left:467.40px;top:732.81px;" width="20.60" height="24.20" viewBox="0 0 20.6 24.2"><path d="M1.1 1.1H13.8L19.5 6.8V23.1H1.1Z" fill="#fff" stroke="#333" stroke-width="2.1" stroke-linejoin="round"/><path d="M13.8 1.1V6.8H19.5" fill="none" stroke="#333" stroke-width="1.8"/></svg><span class="t" style="left:498.30px;top:733.96px;font-size:20.5px;line-height:20.5px;color:#161616;letter-spacing:-0.105px;width:200.70px;overflow:hidden;height:26.7px;">Inventory Reorder Rep</span><div class="a" style="left:445.60px;top:778.49px;width:17.00px;height:1.50px;background-image:repeating-linear-gradient(to right,#a4a4a4 0,#a4a4a4 1.4px,transparent 1.4px,transparent 3.5px);"></div><svg class="a" style="left:467.40px;top:764.34px;" width="20.60" height="24.20" viewBox="0 0 20.6 24.2"><path d="M1.1 1.1H13.8L19.5 6.8V23.1H1.1Z" fill="#fff" stroke="#333" stroke-width="2.1" stroke-linejoin="round"/><path d="M13.8 1.1V6.8H19.5" fill="none" stroke="#333" stroke-width="1.8"/></svg><span class="t" style="left:498.30px;top:765.49px;font-size:20.5px;line-height:20.5px;color:#161616;letter-spacing:0.362px;width:200.70px;overflow:hidden;height:26.7px;">Inventory Valuation</span><div class="a" style="left:445.60px;top:810.02px;width:17.00px;height:1.50px;background-image:repeating-linear-gradient(to right,#a4a4a4 0,#a4a4a4 1.4px,transparent 1.4px,transparent 3.5px);"></div><svg class="a" style="left:467.40px;top:795.87px;" width="20.60" height="24.20" viewBox="0 0 20.6 24.2"><path d="M1.1 1.1H13.8L19.5 6.8V23.1H1.1Z" fill="#fff" stroke="#333" stroke-width="2.1" stroke-linejoin="round"/><path d="M13.8 1.1V6.8H19.5" fill="none" stroke="#333" stroke-width="1.8"/></svg><span class="t" style="left:498.30px;top:797.02px;font-size:20.5px;line-height:20.5px;color:#161616;letter-spacing:-0.030px;width:200.70px;overflow:hidden;height:26.7px;">Lot Serial Locations</span><div class="a" style="left:445.60px;top:841.55px;width:17.00px;height:1.50px;background-image:repeating-linear-gradient(to right,#a4a4a4 0,#a4a4a4 1.4px,transparent 1.4px,transparent 3.5px);"></div><svg class="a" style="left:467.40px;top:827.40px;" width="20.60" height="24.20" viewBox="0 0 20.6 24.2"><path d="M1.1 1.1H13.8L19.5 6.8V23.1H1.1Z" fill="#fff" stroke="#333" stroke-width="2.1" stroke-linejoin="round"/><path d="M13.8 1.1V6.8H19.5" fill="none" stroke="#333" stroke-width="1.8"/></svg><span class="t" style="left:498.30px;top:828.55px;font-size:20.5px;line-height:20.5px;color:#161616;letter-spacing:0.071px;width:200.70px;overflow:hidden;height:26.7px;">Primary Location Rest</span><div class="a" style="left:445.60px;top:873.08px;width:17.00px;height:1.50px;background-image:repeating-linear-gradient(to right,#a4a4a4 0,#a4a4a4 1.4px,transparent 1.4px,transparent 3.5px);"></div><svg class="a" style="left:467.40px;top:858.93px;" width="20.60" height="24.20" viewBox="0 0 20.6 24.2"><path d="M1.1 1.1H13.8L19.5 6.8V23.1H1.1Z" fill="#fff" stroke="#333" stroke-width="2.1" stroke-linejoin="round"/><path d="M13.8 1.1V6.8H19.5" fill="none" stroke="#333" stroke-width="1.8"/></svg><span class="t" style="left:498.30px;top:860.08px;font-size:20.5px;line-height:20.5px;color:#161616;letter-spacing:0.017px;width:200.70px;overflow:hidden;height:26.7px;">Product Warehouse S</span><div class="a" style="left:445.60px;top:904.61px;width:17.00px;height:1.50px;background-image:repeating-linear-gradient(to right,#a4a4a4 0,#a4a4a4 1.4px,transparent 1.4px,transparent 3.5px);"></div><svg class="a" style="left:467.40px;top:890.46px;" width="20.60" height="24.20" viewBox="0 0 20.6 24.2"><path d="M1.1 1.1H13.8L19.5 6.8V23.1H1.1Z" fill="#fff" stroke="#333" stroke-width="2.1" stroke-linejoin="round"/><path d="M13.8 1.1V6.8H19.5" fill="none" stroke="#333" stroke-width="1.8"/></svg><span class="t" style="left:498.30px;top:891.61px;font-size:20.5px;line-height:20.5px;color:#161616;letter-spacing:0.174px;width:200.70px;overflow:hidden;height:26.7px;">Stock On Hand</span><div class="a" style="left:385.20px;top:936.14px;width:11.90px;height:1.50px;background-image:repeating-linear-gradient(to right,#a4a4a4 0,#a4a4a4 1.4px,transparent 1.4px,transparent 3.5px);"></div><svg class="a" style="left:369.60px;top:929.24px;" width="15.30" height="15.30" viewBox="0 0 15.3 15.3"><rect x="0.65" y="0.65" width="14" height="14" fill="#fff" stroke="#9b9b9b" stroke-width="1.3"/><path d="M3.3 7.65H12" stroke="#111" stroke-width="1.9"/><path d="M7.65 3.3V12" stroke="#111" stroke-width="1.9"/></svg><svg class="a" style="left:398.80px;top:923.19px;" width="23.20" height="20.80" viewBox="0 0 23.2 20.8"><path d="M1.1 18.4V3.3Q1.1 1.1 3.3 1.1H8.7L11.6 4.3H18.9Q20.5 4.3 20.5 5.9V7" fill="none" stroke="#2b2b2b" stroke-width="2.1"/><path d="M1.1 18V18.6Q1.1 19.7 2.4 19.7H5" fill="none" stroke="#2b2b2b" stroke-width="2.1"/><rect x="3.7" y="7.1" width="19.3" height="13.6" rx="2.4" fill="#2b2b2b"/></svg><span class="t" style="left:432.20px;top:923.14px;font-size:20.5px;line-height:20.5px;color:#161616;letter-spacing:-0.625px;width:266.80px;overflow:hidden;height:26.7px;">Issue</span><div class="a" style="left:385.20px;top:967.67px;width:11.90px;height:1.50px;background-image:repeating-linear-gradient(to right,#a4a4a4 0,#a4a4a4 1.4px,transparent 1.4px,transparent 3.5px);"></div><svg class="a" style="left:369.60px;top:960.77px;" width="15.30" height="15.30" viewBox="0 0 15.3 15.3"><rect x="0.65" y="0.65" width="14" height="14" fill="#fff" stroke="#9b9b9b" stroke-width="1.3"/><path d="M3.3 7.65H12" stroke="#111" stroke-width="1.9"/><path d="M7.65 3.3V12" stroke="#111" stroke-width="1.9"/></svg><svg class="a" style="left:398.80px;top:954.72px;" width="23.20" height="20.80" viewBox="0 0 23.2 20.8"><path d="M1.1 18.4V3.3Q1.1 1.1 3.3 1.1H8.7L11.6 4.3H18.9Q20.5 4.3 20.5 5.9V7" fill="none" stroke="#2b2b2b" stroke-width="2.1"/><path d="M1.1 18V18.6Q1.1 19.7 2.4 19.7H5" fill="none" stroke="#2b2b2b" stroke-width="2.1"/><rect x="3.7" y="7.1" width="19.3" height="13.6" rx="2.4" fill="#2b2b2b"/></svg><span class="t" style="left:432.20px;top:954.67px;font-size:20.5px;line-height:20.5px;color:#161616;letter-spacing:-0.101px;width:266.80px;overflow:hidden;height:26.7px;">OrderProcessing</span><div class="a" style="left:700.00px;top:191.00px;width:29.70px;height:793.50px;background:#f0f0f0;"></div><div class="a" style="left:700.30px;top:224.00px;width:26.20px;height:674.00px;background:#cdcdcd;"></div><svg class="a" style="left:706.50px;top:203.00px;" width="13.20" height="11.00" viewBox="0 0 13.2 11"><polygon points="0.00,10.00 0.90,11.00 3.50,11.00 6.60,6.10 9.70,11.00 12.30,11.00 13.20,10.00 6.60,0.00" fill="#000"/></svg><svg class="a" style="left:706.50px;top:962.60px;" width="13.20" height="11.00" viewBox="0 0 13.2 11"><polygon points="0.00,1.00 0.90,0.00 3.50,0.00 6.60,4.90 9.70,0.00 12.30,0.00 13.20,1.00 6.60,11.00" fill="#000"/></svg><div class="a" style="left:707.00px;top:553.30px;width:12.40px;height:2.50px;background:#595959;"></div><div class="a" style="left:707.00px;top:559.30px;width:12.40px;height:2.50px;background:#595959;"></div><div class="a" style="left:707.00px;top:565.30px;width:12.40px;height:2.50px;background:#595959;"></div><div class="a" style="left:361.00px;top:985.80px;width:339.00px;height:26.00px;background:#f0f0f0;"></div><div class="a" style="left:700.00px;top:984.50px;width:29.70px;height:27.80px;background:#fafafa;"></div><div class="a" style="left:393.80px;top:986.20px;width:190.60px;height:25.20px;background:#cdcdcd;"></div><svg class="a" style="left:372.20px;top:992.80px;" width="11.20" height="12.80" viewBox="0 0 11.2 12.8"><polygon points="10.20,0.00 11.20,0.90 11.20,3.50 6.30,6.40 11.20,9.30 11.20,11.90 10.20,12.80 0.00,6.40" fill="#000"/></svg><svg class="a" style="left:676.70px;top:992.80px;" width="11.20" height="12.80" viewBox="0 0 11.2 12.8"><polygon points="1.00,0.00 0.00,0.90 0.00,3.50 4.90,6.40 0.00,9.30 0.00,11.90 1.00,12.80 11.20,6.40" fill="#000"/></svg><div class="a" style="left:481.20px;top:992.80px;width:2.50px;height:12.40px;background:#595959;"></div><div class="a" style="left:487.20px;top:992.80px;width:2.50px;height:12.40px;background:#595959;"></div><div class="a" style="left:493.20px;top:992.80px;width:2.50px;height:12.40px;background:#595959;"></div><div class="a" style="left:731.20px;top:145.20px;width:6.80px;height:867.10px;background:#f7f7f7;"></div><div class="a" style="left:738.20px;top:145.20px;width:3.80px;height:867.10px;background:linear-gradient(to right,#a0a0a0,#6c6c6c 60%,#787878);"></div><div class="a" style="left:742.00px;top:145.20px;width:5.00px;height:867.10px;background:linear-gradient(to right,#ededed,#fafafa);"></div><div class="a" style="left:742.00px;top:145.20px;width:788.00px;height:42.00px;background:#f6f6f6;"></div><div class="a" style="left:747.60px;top:151.40px;width:111.60px;height:29.40px;background:#ececec;"></div><div class="a" style="left:859.20px;top:147.60px;width:197.00px;height:39.60px;background:#f9f9f9;"></div><div class="a" style="left:1055.80px;top:147.40px;width:2.60px;height:34.20px;background:#6f6f6f;"></div><div class="a" style="left:1058.40px;top:151.40px;width:204.00px;height:29.40px;background:#ececec;"></div><div class="a" style="left:1262.40px;top:151.40px;width:2.70px;height:28.40px;background:#6f6f6f;"></div><span class="t" style="left:761.00px;top:157.45px;font-size:20.5px;line-height:20.5px;color:#161616;letter-spacing:0.029px;">Properties</span><span class="t" style="left:874.20px;top:155.55px;font-size:20.5px;line-height:20.5px;color:#161616;letter-spacing:0.165px;">Selection Prompts</span><span class="t" style="left:1067.20px;top:157.45px;font-size:20.5px;line-height:20.5px;color:#161616;letter-spacing:0.227px;">Printer Assignments</span><div class="a" style="left:752.00px;top:189.00px;width:33.00px;height:33.00px;background:#fafafa;box-sizing:border-box;border-right:1.5px solid #d6d6d6;border-bottom:1.6px solid #cfcfcf;"></div><div class="a" style="left:788.80px;top:189.00px;width:213.20px;height:33.00px;background:#fafafa;box-sizing:border-box;border-right:1.5px solid #d6d6d6;border-bottom:1.6px solid #cfcfcf;"></div><div class="a" style="left:1006.00px;top:189.00px;width:158.40px;height:33.00px;background:#fafafa;box-sizing:border-box;border-right:1.5px solid #d6d6d6;border-bottom:1.6px solid #cfcfcf;"></div><div class="a" style="left:1168.00px;top:189.00px;width:159.60px;height:33.00px;background:#fafafa;box-sizing:border-box;border-right:1.5px solid #d6d6d6;border-bottom:1.6px solid #cfcfcf;"></div><div class="a" style="left:1331.00px;top:189.00px;width:101.00px;height:33.00px;background:#fafafa;box-sizing:border-box;border-right:1.5px solid #d6d6d6;border-bottom:1.6px solid #cfcfcf;"></div><span class="t" style="left:794.20px;top:195.65px;font-size:20.5px;line-height:20.5px;color:#161616;letter-spacing:-0.159px;">Field</span><span class="t" style="left:1010.80px;top:195.65px;font-size:20.5px;line-height:20.5px;color:#161616;letter-spacing:-0.418px;">Type</span><span class="t" style="left:1174.00px;top:195.65px;font-size:20.5px;line-height:20.5px;color:#161616;letter-spacing:1.024px;">Prompt</span><span class="t" style="left:1340.20px;top:195.65px;font-size:20.5px;line-height:20.5px;color:#161616;letter-spacing:0.014px;">Required</span><div class="a" style="left:752.00px;top:223.40px;width:33.00px;height:30.20px;background:#fafafa;box-sizing:border-box;border-right:1.5px solid #d6d6d6;border-bottom:1.6px solid #cfcfcf;"></div><div class="a" style="left:788.50px;top:223.40px;width:214.90px;height:31.42px;background:#ffffff;box-sizing:border-box;border-right:1.5px solid #dadada;border-bottom:1.6px solid #d8d8d8;"></div><div class="a" style="left:1005.00px;top:223.40px;width:160.60px;height:31.42px;background:#ffffff;box-sizing:border-box;border-right:1.5px solid #dadada;border-bottom:1.6px solid #d8d8d8;"></div><div class="a" style="left:1167.20px;top:223.40px;width:161.80px;height:31.42px;background:#ffffff;box-sizing:border-box;border-right:1.5px solid #dadada;border-bottom:1.6px solid #d8d8d8;"></div><div class="a" style="left:1330.60px;top:223.40px;width:103.80px;height:31.42px;background:#ffffff;box-sizing:border-box;border-right:1.5px solid #dadada;border-bottom:1.6px solid #d8d8d8;"></div><span class="t" style="left:792.50px;top:229.25px;font-size:20.5px;line-height:20.5px;color:#161616;letter-spacing:0.084px;width:175.70px;overflow:hidden;height:26.7px;">ProductWarehouse</span><span class="t" style="left:1010.40px;top:229.25px;font-size:20.5px;line-height:20.5px;color:#161616;letter-spacing:-0.336px;">Text</span><span class="t" style="left:1172.00px;top:229.25px;font-size:20.5px;line-height:20.5px;color:#161616;letter-spacing:0.115px;">Warehouse</span><div class="a" style="left:1371.60px;top:229.00px;width:19.00px;height:18.60px;background:#fff;box-sizing:border-box;border-top:2.2px solid #3a3a3a;border-left:2.2px solid #3a3a3a;border-right:1.4px solid #ececec;border-bottom:1.4px solid #ececec;"></div><div class="a" style="left:752.00px;top:254.82px;width:33.00px;height:30.20px;background:#fafafa;box-sizing:border-box;border-right:1.5px solid #d6d6d6;border-bottom:1.6px solid #cfcfcf;"></div><div class="a" style="left:788.50px;top:254.82px;width:214.90px;height:31.42px;background:#eaf3fb;box-sizing:border-box;border-right:1.5px solid #dadada;border-bottom:1.6px solid #d8d8d8;"></div><div class="a" style="left:1005.00px;top:254.82px;width:160.60px;height:31.42px;background:#eaf3fb;box-sizing:border-box;border-right:1.5px solid #dadada;border-bottom:1.6px solid #d8d8d8;"></div><div class="a" style="left:1167.20px;top:254.82px;width:161.80px;height:31.42px;background:#eaf3fb;box-sizing:border-box;border-right:1.5px solid #dadada;border-bottom:1.6px solid #d8d8d8;"></div><div class="a" style="left:1330.60px;top:254.82px;width:103.80px;height:31.42px;background:#eaf3fb;box-sizing:border-box;border-right:1.5px solid #dadada;border-bottom:1.6px solid #d8d8d8;"></div><span class="t" style="left:792.50px;top:260.67px;font-size:20.5px;line-height:20.5px;color:#161616;letter-spacing:0.334px;width:175.70px;overflow:hidden;height:26.7px;">Product.ProductCla</span><span class="t" style="left:1010.40px;top:260.67px;font-size:20.5px;line-height:20.5px;color:#161616;letter-spacing:-0.336px;">Text</span><span class="t" style="left:1172.00px;top:260.67px;font-size:20.5px;line-height:20.5px;color:#161616;letter-spacing:-0.076px;">Product Class</span><div class="a" style="left:1371.60px;top:260.42px;width:19.00px;height:18.60px;background:#fff;box-sizing:border-box;border-top:2.2px solid #3a3a3a;border-left:2.2px solid #3a3a3a;border-right:1.4px solid #ececec;border-bottom:1.4px solid #ececec;"></div><div class="a" style="left:752.00px;top:286.24px;width:33.00px;height:30.20px;background:#fafafa;box-sizing:border-box;border-right:1.5px solid #d6d6d6;border-bottom:1.6px solid #cfcfcf;"></div><div class="a" style="left:788.50px;top:286.24px;width:214.90px;height:31.42px;background:#ffffff;box-sizing:border-box;border-right:1.5px solid #dadada;border-bottom:1.6px solid #d8d8d8;"></div><div class="a" style="left:1005.00px;top:286.24px;width:160.60px;height:31.42px;background:#ffffff;box-sizing:border-box;border-right:1.5px solid #dadada;border-bottom:1.6px solid #d8d8d8;"></div><div class="a" style="left:1167.20px;top:286.24px;width:161.80px;height:31.42px;background:#ffffff;box-sizing:border-box;border-right:1.5px solid #dadada;border-bottom:1.6px solid #d8d8d8;"></div><div class="a" style="left:1330.60px;top:286.24px;width:103.80px;height:31.42px;background:#ffffff;box-sizing:border-box;border-right:1.5px solid #dadada;border-bottom:1.6px solid #d8d8d8;"></div><span class="t" style="left:792.50px;top:292.09px;font-size:20.5px;line-height:20.5px;color:#161616;letter-spacing:-0.227px;width:175.70px;overflow:hidden;height:26.7px;">Product.SalesCateg</span><span class="t" style="left:1010.40px;top:292.09px;font-size:20.5px;line-height:20.5px;color:#161616;letter-spacing:-0.336px;">Text</span><span class="t" style="left:1172.00px;top:292.09px;font-size:20.5px;line-height:20.5px;color:#161616;letter-spacing:-0.336px;">Sales Category</span><div class="a" style="left:1371.60px;top:291.84px;width:19.00px;height:18.60px;background:#fff;box-sizing:border-box;border-top:2.2px solid #3a3a3a;border-left:2.2px solid #3a3a3a;border-right:1.4px solid #ececec;border-bottom:1.4px solid #ececec;"></div><div class="a" style="left:752.00px;top:317.66px;width:33.00px;height:30.20px;background:#fafafa;box-sizing:border-box;border-right:1.5px solid #d6d6d6;border-bottom:1.6px solid #cfcfcf;"></div><div class="a" style="left:788.50px;top:317.66px;width:214.90px;height:31.42px;background:#eaf3fb;box-sizing:border-box;border-right:1.5px solid #dadada;border-bottom:1.6px solid #d8d8d8;"></div><div class="a" style="left:1005.00px;top:317.66px;width:160.60px;height:31.42px;background:#eaf3fb;box-sizing:border-box;border-right:1.5px solid #dadada;border-bottom:1.6px solid #d8d8d8;"></div><div class="a" style="left:1167.20px;top:317.66px;width:161.80px;height:31.42px;background:#eaf3fb;box-sizing:border-box;border-right:1.5px solid #dadada;border-bottom:1.6px solid #d8d8d8;"></div><div class="a" style="left:1330.60px;top:317.66px;width:103.80px;height:31.42px;background:#eaf3fb;box-sizing:border-box;border-right:1.5px solid #dadada;border-bottom:1.6px solid #d8d8d8;"></div><span class="t" style="left:792.50px;top:323.51px;font-size:20.5px;line-height:20.5px;color:#161616;letter-spacing:0.129px;width:175.70px;overflow:hidden;height:26.7px;">Product.ProductTyp</span><span class="t" style="left:1010.40px;top:323.51px;font-size:20.5px;line-height:20.5px;color:#161616;letter-spacing:-0.336px;">Text</span><span class="t" style="left:1172.00px;top:323.51px;font-size:20.5px;line-height:20.5px;color:#161616;letter-spacing:0.216px;">Product Type</span><div class="a" style="left:1371.60px;top:323.26px;width:19.00px;height:18.60px;background:#fff;box-sizing:border-box;border-top:2.2px solid #3a3a3a;border-left:2.2px solid #3a3a3a;border-right:1.4px solid #ececec;border-bottom:1.4px solid #ececec;"></div><div class="a" style="left:752.00px;top:349.08px;width:33.00px;height:30.20px;background:#fafafa;box-sizing:border-box;border-right:1.5px solid #d6d6d6;border-bottom:1.6px solid #cfcfcf;"></div><div class="a" style="left:788.50px;top:349.08px;width:214.90px;height:31.42px;background:#ffffff;box-sizing:border-box;border-right:1.5px solid #dadada;border-bottom:1.6px solid #d8d8d8;"></div><div class="a" style="left:1005.00px;top:349.08px;width:160.60px;height:31.42px;background:#ffffff;box-sizing:border-box;border-right:1.5px solid #dadada;border-bottom:1.6px solid #d8d8d8;"></div><div class="a" style="left:1167.20px;top:349.08px;width:161.80px;height:31.42px;background:#ffffff;box-sizing:border-box;border-right:1.5px solid #dadada;border-bottom:1.6px solid #d8d8d8;"></div><div class="a" style="left:1330.60px;top:349.08px;width:103.80px;height:31.42px;background:#ffffff;box-sizing:border-box;border-right:1.5px solid #dadada;border-bottom:1.6px solid #d8d8d8;"></div><span class="t" style="left:792.50px;top:354.93px;font-size:20.5px;line-height:20.5px;color:#161616;letter-spacing:0.288px;width:175.70px;overflow:hidden;height:26.7px;">Product.ProductID</span><span class="t" style="left:1010.40px;top:354.93px;font-size:20.5px;line-height:20.5px;color:#161616;letter-spacing:0.082px;">Product ID</span><span class="t" style="left:1172.00px;top:354.93px;font-size:20.5px;line-height:20.5px;color:#161616;letter-spacing:0.193px;">Product ID</span><div class="a" style="left:1371.60px;top:354.68px;width:19.00px;height:18.60px;background:#fff;box-sizing:border-box;border-top:2.2px solid #3a3a3a;border-left:2.2px solid #3a3a3a;border-right:1.4px solid #ececec;border-bottom:1.4px solid #ececec;"></div><div class="a" style="left:752.00px;top:380.50px;width:33.00px;height:30.20px;background:#fafafa;box-sizing:border-box;border-right:1.5px solid #d6d6d6;border-bottom:1.6px solid #cfcfcf;"></div><div class="a" style="left:788.50px;top:380.50px;width:214.90px;height:31.42px;background:#eaf3fb;box-sizing:border-box;border-right:1.5px solid #dadada;border-bottom:1.6px solid #d8d8d8;"></div><div class="a" style="left:1005.00px;top:380.50px;width:160.60px;height:31.42px;background:#eaf3fb;box-sizing:border-box;border-right:1.5px solid #dadada;border-bottom:1.6px solid #d8d8d8;"></div><div class="a" style="left:1167.20px;top:380.50px;width:161.80px;height:31.42px;background:#eaf3fb;box-sizing:border-box;border-right:1.5px solid #dadada;border-bottom:1.6px solid #d8d8d8;"></div><div class="a" style="left:1330.60px;top:380.50px;width:103.80px;height:31.42px;background:#eaf3fb;box-sizing:border-box;border-right:1.5px solid #dadada;border-bottom:1.6px solid #d8d8d8;"></div><div class="a" style="left:1371.60px;top:386.10px;width:19.00px;height:18.60px;background:#fff;box-sizing:border-box;border-top:2.2px solid #3a3a3a;border-left:2.2px solid #3a3a3a;border-right:1.4px solid #ececec;border-bottom:1.4px solid #ececec;"></div><svg class="a" style="left:761.00px;top:389.00px;" width="16.00" height="16.00" viewBox="0 0 16 16"><path d="M8 8L15.60 8.00" stroke="#000" stroke-width="1.7"/><path d="M8 8L13.37 13.37" stroke="#000" stroke-width="1.7"/><path d="M8 8L8.00 15.60" stroke="#000" stroke-width="1.7"/><path d="M8 8L2.63 13.37" stroke="#000" stroke-width="1.7"/><path d="M8 8L0.40 8.00" stroke="#000" stroke-width="1.7"/><path d="M8 8L2.63 2.63" stroke="#000" stroke-width="1.7"/><path d="M8 8L8.00 0.40" stroke="#000" stroke-width="1.7"/><path d="M8 8L13.37 2.63" stroke="#000" stroke-width="1.7"/><circle cx="8" cy="8" r="2.4" fill="#000"/></svg><svg class="a" style="left:1497.40px;top:292.00px;" width="17.00" height="25.00" viewBox="0 0 17 25"><path d="M8.5 24.6V6" stroke="#666" stroke-width="4.6"/><path d="M1.6 11.6L8.5 3.4L15.4 11.6" fill="none" stroke="#666" stroke-width="4.4" stroke-linejoin="miter"/></svg><svg class="a" style="left:1497.40px;top:372.60px;" width="17.00" height="25.00" viewBox="0 0 17 25"><path d="M8.5 0.4V19" stroke="#666" stroke-width="4.6"/><path d="M1.6 13.4L8.5 21.6L15.4 13.4" fill="none" stroke="#666" stroke-width="4.4" stroke-linejoin="miter"/></svg><div class="a" style="left:816.00px;top:455.00px;width:448.00px;height:525.00px;background:#3f9ad7;"></div><div class="a" style="left:824.80px;top:509.60px;width:429.60px;height:461.60px;background:#fafafa;"></div><div class="a" style="left:824.80px;top:509.60px;width:429.60px;height:408.00px;background:#fff;box-sizing:border-box;border-left:1.4px solid #9a9a9a;border-top:1.2px solid #b4b4b4;border-bottom:1.6px solid #a3a3a3;"></div><svg class="a" style="left:831.00px;top:474.60px;" width="23.40" height="22.60" viewBox="0 0 23.4 22.6"><rect x="1.1" y="7.4" width="13.8" height="13.4" fill="none" stroke="#d9ebf8" stroke-width="1.8"/><path d="M3.6 11L8.8 16.8L20.8 2.8" fill="none" stroke="#fff" stroke-width="4.9"/></svg><span class="t" style="left:861.40px;top:476.12px;font-size:22.3px;line-height:22.3px;color:#fff;letter-spacing:-0.169px;">Select Field Na...</span><div class="a" style="left:1071.40px;top:484.20px;width:14.20px;height:4.00px;background:#fff;"></div><svg class="a" style="left:1134.20px;top:474.40px;" width="17.80" height="13.80" viewBox="0 0 17.8 13.8"><rect x="0.9" y="2" width="16" height="10.9" fill="none" stroke="#fff" stroke-width="1.8"/><rect x="0" y="0" width="17.8" height="3" fill="#fff"/></svg><svg class="a" style="left:1204.20px;top:474.20px;" width="14.40" height="12.60" viewBox="0 0 14.4 12.6"><path d="M1.2 1L13.2 11.6M13.2 1L1.2 11.6" stroke="#fff" stroke-width="2.4" fill="none"/></svg><div class="a" style="left:875.65px;top:511.00px;width:1.50px;height:12.60px;background-image:repeating-linear-gradient(to bottom,#a4a4a4 0,#a4a4a4 1.4px,transparent 1.4px,transparent 3.5px);"></div><div class="a" style="left:875.65px;top:539.00px;width:1.50px;height:377.60px;background-image:repeating-linear-gradient(to bottom,#a4a4a4 0,#a4a4a4 1.4px,transparent 1.4px,transparent 3.5px);"></div><div class="a" style="left:908.65px;top:544.00px;width:1.50px;height:372.60px;background-image:repeating-linear-gradient(to bottom,#a4a4a4 0,#a4a4a4 1.4px,transparent 1.4px,transparent 3.5px);"></div><div class="a" style="left:886.60px;top:530.45px;width:9.40px;height:1.50px;background-image:repeating-linear-gradient(to right,#a4a4a4 0,#a4a4a4 1.4px,transparent 1.4px,transparent 3.5px);"></div><svg class="a" style="left:868.70px;top:523.50px;" width="15.30" height="15.30" viewBox="0 0 15.3 15.3"><rect x="0.65" y="0.65" width="14" height="14" fill="#fff" stroke="#9b9b9b" stroke-width="1.3"/><path d="M3.3 7.65H12" stroke="#111" stroke-width="1.9"/></svg><svg class="a" style="left:896.20px;top:516.10px;" width="28.00" height="24.60" viewBox="0 0 28 24.6"><rect x="0" y="0" width="28" height="24.6" rx="3" fill="#333"/><rect x="2.05" y="3.6" width="23.90" height="19.15" fill="#a6d2ef"/><rect x="2.05" y="3.6" width="9.08" height="4.00" fill="#333"/><rect x="11.80" y="18.75" width="14.15" height="4.00" fill="#333"/><rect x="2.05" y="3.60" width="3.6" height="3.7" fill="#fff"/><rect x="7.12" y="3.60" width="3.6" height="3.7" fill="#fff"/><rect x="12.20" y="3.60" width="3.6" height="3.7" fill="#3a9ad9"/><rect x="17.28" y="3.60" width="3.6" height="3.7" fill="#3a9ad9"/><rect x="22.35" y="3.60" width="3.6" height="3.7" fill="#3a9ad9"/><rect x="2.05" y="8.75" width="3.6" height="3.7" fill="#3a9ad9"/><rect x="7.12" y="8.75" width="3.6" height="3.7" fill="#3a9ad9"/><rect x="12.20" y="8.75" width="3.6" height="3.7" fill="#3a9ad9"/><rect x="17.28" y="8.75" width="3.6" height="3.7" fill="#3a9ad9"/><rect x="22.35" y="8.75" width="3.6" height="3.7" fill="#3a9ad9"/><rect x="2.05" y="13.90" width="3.6" height="3.7" fill="#3a9ad9"/><rect x="7.12" y="13.90" width="3.6" height="3.7" fill="#3a9ad9"/><rect x="12.20" y="13.90" width="3.6" height="3.7" fill="#3a9ad9"/><rect x="17.28" y="13.90" width="3.6" height="3.7" fill="#3a9ad9"/><rect x="22.35" y="13.90" width="3.6" height="3.7" fill="#3a9ad9"/><rect x="2.05" y="19.05" width="3.6" height="3.7" fill="#3a9ad9"/><rect x="7.12" y="19.05" width="3.6" height="3.7" fill="#3a9ad9"/><rect x="12.20" y="19.05" width="3.6" height="3.7" fill="#fff"/><rect x="17.28" y="19.05" width="3.6" height="3.7" fill="#fff"/><rect x="22.35" y="19.05" width="3.6" height="3.7" fill="#fff"/></svg><span class="t" style="left:931.60px;top:517.65px;font-size:20.5px;line-height:20.5px;color:#161616;letter-spacing:0.069px;">LotSerialInventory</span><div class="a" style="left:912.60px;top:561.77px;width:16.00px;height:1.50px;background-image:repeating-linear-gradient(to right,#a4a4a4 0,#a4a4a4 1.4px,transparent 1.4px,transparent 3.5px);"></div><svg class="a" style="left:929.80px;top:547.62px;" width="28.10" height="24.20" viewBox="0 0 28.1 24.2"><rect x="0" y="0" width="28.1" height="24.2" rx="3" fill="#373737"/><rect x="5.35" y="3.50" width="7.20" height="18.75" fill="#a6d2ef"/><rect x="2.05" y="3.50" width="3.6" height="3.6" fill="#fff"/><rect x="7.15" y="3.50" width="3.6" height="3.6" fill="#3a9ad9"/><rect x="12.25" y="3.50" width="3.6" height="3.6" fill="#fff"/><rect x="17.35" y="3.50" width="3.6" height="3.6" fill="#fff"/><rect x="22.45" y="3.50" width="3.6" height="3.6" fill="#fff"/><rect x="2.05" y="8.55" width="3.6" height="3.6" fill="#fff"/><rect x="7.15" y="8.55" width="3.6" height="3.6" fill="#3a9ad9"/><rect x="12.25" y="8.55" width="3.6" height="3.6" fill="#fff"/><rect x="17.35" y="8.55" width="3.6" height="3.6" fill="#fff"/><rect x="22.45" y="8.55" width="3.6" height="3.6" fill="#fff"/><rect x="2.05" y="13.60" width="3.6" height="3.6" fill="#fff"/><rect x="7.15" y="13.60" width="3.6" height="3.6" fill="#3a9ad9"/><rect x="12.25" y="13.60" width="3.6" height="3.6" fill="#fff"/><rect x="17.35" y="13.60" width="3.6" height="3.6" fill="#fff"/><rect x="22.45" y="13.60" width="3.6" height="3.6" fill="#fff"/><rect x="2.05" y="18.65" width="3.6" height="3.6" fill="#fff"/><rect x="7.15" y="18.65" width="3.6" height="3.6" fill="#3a9ad9"/><rect x="12.25" y="18.65" width="3.6" height="3.6" fill="#fff"/><rect x="17.35" y="18.65" width="3.6" height="3.6" fill="#fff"/><rect x="22.45" y="18.65" width="3.6" height="3.6" fill="#fff"/></svg><span class="t" style="left:964.20px;top:549.17px;font-size:20.5px;line-height:20.5px;color:#161616;letter-spacing:1.529px;">Amount</span><div class="a" style="left:912.60px;top:593.29px;width:16.00px;height:1.50px;background-image:repeating-linear-gradient(to right,#a4a4a4 0,#a4a4a4 1.4px,transparent 1.4px,transparent 3.5px);"></div><svg class="a" style="left:929.80px;top:579.14px;" width="28.10" height="24.20" viewBox="0 0 28.1 24.2"><rect x="0" y="0" width="28.1" height="24.2" rx="3" fill="#373737"/><rect x="5.35" y="3.50" width="7.20" height="18.75" fill="#a6d2ef"/><rect x="2.05" y="3.50" width="3.6" height="3.6" fill="#fff"/><rect x="7.15" y="3.50" width="3.6" height="3.6" fill="#3a9ad9"/><rect x="12.25" y="3.50" width="3.6" height="3.6" fill="#fff"/><rect x="17.35" y="3.50" width="3.6" height="3.6" fill="#fff"/><rect x="22.45" y="3.50" width="3.6" height="3.6" fill="#fff"/><rect x="2.05" y="8.55" width="3.6" height="3.6" fill="#fff"/><rect x="7.15" y="8.55" width="3.6" height="3.6" fill="#3a9ad9"/><rect x="12.25" y="8.55" width="3.6" height="3.6" fill="#fff"/><rect x="17.35" y="8.55" width="3.6" height="3.6" fill="#fff"/><rect x="22.45" y="8.55" width="3.6" height="3.6" fill="#fff"/><rect x="2.05" y="13.60" width="3.6" height="3.6" fill="#fff"/><rect x="7.15" y="13.60" width="3.6" height="3.6" fill="#3a9ad9"/><rect x="12.25" y="13.60" width="3.6" height="3.6" fill="#fff"/><rect x="17.35" y="13.60" width="3.6" height="3.6" fill="#fff"/><rect x="22.45" y="13.60" width="3.6" height="3.6" fill="#fff"/><rect x="2.05" y="18.65" width="3.6" height="3.6" fill="#fff"/><rect x="7.15" y="18.65" width="3.6" height="3.6" fill="#3a9ad9"/><rect x="12.25" y="18.65" width="3.6" height="3.6" fill="#fff"/><rect x="17.35" y="18.65" width="3.6" height="3.6" fill="#fff"/><rect x="22.45" y="18.65" width="3.6" height="3.6" fill="#fff"/></svg><span class="t" style="left:964.20px;top:580.69px;font-size:20.5px;line-height:20.5px;color:#161616;letter-spacing:0.305px;">AmtIssued</span><div class="a" style="left:912.60px;top:624.81px;width:16.00px;height:1.50px;background-image:repeating-linear-gradient(to right,#a4a4a4 0,#a4a4a4 1.4px,transparent 1.4px,transparent 3.5px);"></div><svg class="a" style="left:929.80px;top:610.66px;" width="28.10" height="24.20" viewBox="0 0 28.1 24.2"><rect x="0" y="0" width="28.1" height="24.2" rx="3" fill="#373737"/><rect x="5.35" y="3.50" width="7.20" height="18.75" fill="#a6d2ef"/><rect x="2.05" y="3.50" width="3.6" height="3.6" fill="#fff"/><rect x="7.15" y="3.50" width="3.6" height="3.6" fill="#3a9ad9"/><rect x="12.25" y="3.50" width="3.6" height="3.6" fill="#fff"/><rect x="17.35" y="3.50" width="3.6" height="3.6" fill="#fff"/><rect x="22.45" y="3.50" width="3.6" height="3.6" fill="#fff"/><rect x="2.05" y="8.55" width="3.6" height="3.6" fill="#fff"/><rect x="7.15" y="8.55" width="3.6" height="3.6" fill="#3a9ad9"/><rect x="12.25" y="8.55" width="3.6" height="3.6" fill="#fff"/><rect x="17.35" y="8.55" width="3.6" height="3.6" fill="#fff"/><rect x="22.45" y="8.55" width="3.6" height="3.6" fill="#fff"/><rect x="2.05" y="13.60" width="3.6" height="3.6" fill="#fff"/><rect x="7.15" y="13.60" width="3.6" height="3.6" fill="#3a9ad9"/><rect x="12.25" y="13.60" width="3.6" height="3.6" fill="#fff"/><rect x="17.35" y="13.60" width="3.6" height="3.6" fill="#fff"/><rect x="22.45" y="13.60" width="3.6" height="3.6" fill="#fff"/><rect x="2.05" y="18.65" width="3.6" height="3.6" fill="#fff"/><rect x="7.15" y="18.65" width="3.6" height="3.6" fill="#3a9ad9"/><rect x="12.25" y="18.65" width="3.6" height="3.6" fill="#fff"/><rect x="17.35" y="18.65" width="3.6" height="3.6" fill="#fff"/><rect x="22.45" y="18.65" width="3.6" height="3.6" fill="#fff"/></svg><span class="t" style="left:964.20px;top:612.21px;font-size:20.5px;line-height:20.5px;color:#161616;letter-spacing:0.128px;">AmtReceived</span><div class="a" style="left:912.60px;top:656.33px;width:16.00px;height:1.50px;background-image:repeating-linear-gradient(to right,#a4a4a4 0,#a4a4a4 1.4px,transparent 1.4px,transparent 3.5px);"></div><svg class="a" style="left:929.80px;top:642.18px;" width="28.10" height="24.20" viewBox="0 0 28.1 24.2"><rect x="0" y="0" width="28.1" height="24.2" rx="3" fill="#373737"/><rect x="5.35" y="3.50" width="7.20" height="18.75" fill="#a6d2ef"/><rect x="2.05" y="3.50" width="3.6" height="3.6" fill="#fff"/><rect x="7.15" y="3.50" width="3.6" height="3.6" fill="#3a9ad9"/><rect x="12.25" y="3.50" width="3.6" height="3.6" fill="#fff"/><rect x="17.35" y="3.50" width="3.6" height="3.6" fill="#fff"/><rect x="22.45" y="3.50" width="3.6" height="3.6" fill="#fff"/><rect x="2.05" y="8.55" width="3.6" height="3.6" fill="#fff"/><rect x="7.15" y="8.55" width="3.6" height="3.6" fill="#3a9ad9"/><rect x="12.25" y="8.55" width="3.6" height="3.6" fill="#fff"/><rect x="17.35" y="8.55" width="3.6" height="3.6" fill="#fff"/><rect x="22.45" y="8.55" width="3.6" height="3.6" fill="#fff"/><rect x="2.05" y="13.60" width="3.6" height="3.6" fill="#fff"/><rect x="7.15" y="13.60" width="3.6" height="3.6" fill="#3a9ad9"/><rect x="12.25" y="13.60" width="3.6" height="3.6" fill="#fff"/><rect x="17.35" y="13.60" width="3.6" height="3.6" fill="#fff"/><rect x="22.45" y="13.60" width="3.6" height="3.6" fill="#fff"/><rect x="2.05" y="18.65" width="3.6" height="3.6" fill="#fff"/><rect x="7.15" y="18.65" width="3.6" height="3.6" fill="#3a9ad9"/><rect x="12.25" y="18.65" width="3.6" height="3.6" fill="#fff"/><rect x="17.35" y="18.65" width="3.6" height="3.6" fill="#fff"/><rect x="22.45" y="18.65" width="3.6" height="3.6" fill="#fff"/></svg><span class="t" style="left:964.20px;top:643.73px;font-size:20.5px;line-height:20.5px;color:#161616;letter-spacing:0.321px;">Available</span><div class="a" style="left:912.60px;top:687.85px;width:16.00px;height:1.50px;background-image:repeating-linear-gradient(to right,#a4a4a4 0,#a4a4a4 1.4px,transparent 1.4px,transparent 3.5px);"></div><svg class="a" style="left:929.80px;top:673.70px;" width="28.10" height="24.20" viewBox="0 0 28.1 24.2"><rect x="0" y="0" width="28.1" height="24.2" rx="3" fill="#373737"/><rect x="5.35" y="3.50" width="7.20" height="18.75" fill="#a6d2ef"/><rect x="2.05" y="3.50" width="3.6" height="3.6" fill="#fff"/><rect x="7.15" y="3.50" width="3.6" height="3.6" fill="#3a9ad9"/><rect x="12.25" y="3.50" width="3.6" height="3.6" fill="#fff"/><rect x="17.35" y="3.50" width="3.6" height="3.6" fill="#fff"/><rect x="22.45" y="3.50" width="3.6" height="3.6" fill="#fff"/><rect x="2.05" y="8.55" width="3.6" height="3.6" fill="#fff"/><rect x="7.15" y="8.55" width="3.6" height="3.6" fill="#3a9ad9"/><rect x="12.25" y="8.55" width="3.6" height="3.6" fill="#fff"/><rect x="17.35" y="8.55" width="3.6" height="3.6" fill="#fff"/><rect x="22.45" y="8.55" width="3.6" height="3.6" fill="#fff"/><rect x="2.05" y="13.60" width="3.6" height="3.6" fill="#fff"/><rect x="7.15" y="13.60" width="3.6" height="3.6" fill="#3a9ad9"/><rect x="12.25" y="13.60" width="3.6" height="3.6" fill="#fff"/><rect x="17.35" y="13.60" width="3.6" height="3.6" fill="#fff"/><rect x="22.45" y="13.60" width="3.6" height="3.6" fill="#fff"/><rect x="2.05" y="18.65" width="3.6" height="3.6" fill="#fff"/><rect x="7.15" y="18.65" width="3.6" height="3.6" fill="#3a9ad9"/><rect x="12.25" y="18.65" width="3.6" height="3.6" fill="#fff"/><rect x="17.35" y="18.65" width="3.6" height="3.6" fill="#fff"/><rect x="22.45" y="18.65" width="3.6" height="3.6" fill="#fff"/></svg><span class="t" style="left:964.20px;top:675.25px;font-size:20.5px;line-height:20.5px;color:#161616;letter-spacing:0.285px;">Description</span><div class="a" style="left:912.60px;top:719.37px;width:16.00px;height:1.50px;background-image:repeating-linear-gradient(to right,#a4a4a4 0,#a4a4a4 1.4px,transparent 1.4px,transparent 3.5px);"></div><svg class="a" style="left:929.80px;top:705.22px;" width="28.10" height="24.20" viewBox="0 0 28.1 24.2"><rect x="0" y="0" width="28.1" height="24.2" rx="3" fill="#373737"/><rect x="5.35" y="3.50" width="7.20" height="18.75" fill="#a6d2ef"/><rect x="2.05" y="3.50" width="3.6" height="3.6" fill="#fff"/><rect x="7.15" y="3.50" width="3.6" height="3.6" fill="#3a9ad9"/><rect x="12.25" y="3.50" width="3.6" height="3.6" fill="#fff"/><rect x="17.35" y="3.50" width="3.6" height="3.6" fill="#fff"/><rect x="22.45" y="3.50" width="3.6" height="3.6" fill="#fff"/><rect x="2.05" y="8.55" width="3.6" height="3.6" fill="#fff"/><rect x="7.15" y="8.55" width="3.6" height="3.6" fill="#3a9ad9"/><rect x="12.25" y="8.55" width="3.6" height="3.6" fill="#fff"/><rect x="17.35" y="8.55" width="3.6" height="3.6" fill="#fff"/><rect x="22.45" y="8.55" width="3.6" height="3.6" fill="#fff"/><rect x="2.05" y="13.60" width="3.6" height="3.6" fill="#fff"/><rect x="7.15" y="13.60" width="3.6" height="3.6" fill="#3a9ad9"/><rect x="12.25" y="13.60" width="3.6" height="3.6" fill="#fff"/><rect x="17.35" y="13.60" width="3.6" height="3.6" fill="#fff"/><rect x="22.45" y="13.60" width="3.6" height="3.6" fill="#fff"/><rect x="2.05" y="18.65" width="3.6" height="3.6" fill="#fff"/><rect x="7.15" y="18.65" width="3.6" height="3.6" fill="#3a9ad9"/><rect x="12.25" y="18.65" width="3.6" height="3.6" fill="#fff"/><rect x="17.35" y="18.65" width="3.6" height="3.6" fill="#fff"/><rect x="22.45" y="18.65" width="3.6" height="3.6" fill="#fff"/></svg><span class="t" style="left:964.20px;top:706.77px;font-size:20.5px;line-height:20.5px;color:#161616;letter-spacing:0.149px;">ExpirationDate</span><div class="a" style="left:912.60px;top:750.89px;width:16.00px;height:1.50px;background-image:repeating-linear-gradient(to right,#a4a4a4 0,#a4a4a4 1.4px,transparent 1.4px,transparent 3.5px);"></div><svg class="a" style="left:929.80px;top:736.74px;" width="28.10" height="24.20" viewBox="0 0 28.1 24.2"><rect x="0" y="0" width="28.1" height="24.2" rx="3" fill="#373737"/><rect x="5.35" y="3.50" width="7.20" height="18.75" fill="#a6d2ef"/><rect x="2.05" y="3.50" width="3.6" height="3.6" fill="#fff"/><rect x="7.15" y="3.50" width="3.6" height="3.6" fill="#3a9ad9"/><rect x="12.25" y="3.50" width="3.6" height="3.6" fill="#fff"/><rect x="17.35" y="3.50" width="3.6" height="3.6" fill="#fff"/><rect x="22.45" y="3.50" width="3.6" height="3.6" fill="#fff"/><rect x="2.05" y="8.55" width="3.6" height="3.6" fill="#fff"/><rect x="7.15" y="8.55" width="3.6" height="3.6" fill="#3a9ad9"/><rect x="12.25" y="8.55" width="3.6" height="3.6" fill="#fff"/><rect x="17.35" y="8.55" width="3.6" height="3.6" fill="#fff"/><rect x="22.45" y="8.55" width="3.6" height="3.6" fill="#fff"/><rect x="2.05" y="13.60" width="3.6" height="3.6" fill="#fff"/><rect x="7.15" y="13.60" width="3.6" height="3.6" fill="#3a9ad9"/><rect x="12.25" y="13.60" width="3.6" height="3.6" fill="#fff"/><rect x="17.35" y="13.60" width="3.6" height="3.6" fill="#fff"/><rect x="22.45" y="13.60" width="3.6" height="3.6" fill="#fff"/><rect x="2.05" y="18.65" width="3.6" height="3.6" fill="#fff"/><rect x="7.15" y="18.65" width="3.6" height="3.6" fill="#3a9ad9"/><rect x="12.25" y="18.65" width="3.6" height="3.6" fill="#fff"/><rect x="17.35" y="18.65" width="3.6" height="3.6" fill="#fff"/><rect x="22.45" y="18.65" width="3.6" height="3.6" fill="#fff"/></svg><span class="t" style="left:964.20px;top:738.29px;font-size:20.5px;line-height:20.5px;color:#161616;letter-spacing:0.569px;">Location</span><div class="a" style="left:912.60px;top:782.41px;width:16.00px;height:1.50px;background-image:repeating-linear-gradient(to right,#a4a4a4 0,#a4a4a4 1.4px,transparent 1.4px,transparent 3.5px);"></div><svg class="a" style="left:929.80px;top:768.26px;" width="28.10" height="24.20" viewBox="0 0 28.1 24.2"><rect x="0" y="0" width="28.1" height="24.2" rx="3" fill="#373737"/><rect x="5.35" y="3.50" width="7.20" height="18.75" fill="#a6d2ef"/><rect x="2.05" y="3.50" width="3.6" height="3.6" fill="#fff"/><rect x="7.15" y="3.50" width="3.6" height="3.6" fill="#3a9ad9"/><rect x="12.25" y="3.50" width="3.6" height="3.6" fill="#fff"/><rect x="17.35" y="3.50" width="3.6" height="3.6" fill="#fff"/><rect x="22.45" y="3.50" width="3.6" height="3.6" fill="#fff"/><rect x="2.05" y="8.55" width="3.6" height="3.6" fill="#fff"/><rect x="7.15" y="8.55" width="3.6" height="3.6" fill="#3a9ad9"/><rect x="12.25" y="8.55" width="3.6" height="3.6" fill="#fff"/><rect x="17.35" y="8.55" width="3.6" height="3.6" fill="#fff"/><rect x="22.45" y="8.55" width="3.6" height="3.6" fill="#fff"/><rect x="2.05" y="13.60" width="3.6" height="3.6" fill="#fff"/><rect x="7.15" y="13.60" width="3.6" height="3.6" fill="#3a9ad9"/><rect x="12.25" y="13.60" width="3.6" height="3.6" fill="#fff"/><rect x="17.35" y="13.60" width="3.6" height="3.6" fill="#fff"/><rect x="22.45" y="13.60" width="3.6" height="3.6" fill="#fff"/><rect x="2.05" y="18.65" width="3.6" height="3.6" fill="#fff"/><rect x="7.15" y="18.65" width="3.6" height="3.6" fill="#3a9ad9"/><rect x="12.25" y="18.65" width="3.6" height="3.6" fill="#fff"/><rect x="17.35" y="18.65" width="3.6" height="3.6" fill="#fff"/><rect x="22.45" y="18.65" width="3.6" height="3.6" fill="#fff"/></svg><span class="t" style="left:964.20px;top:769.81px;font-size:20.5px;line-height:20.5px;color:#161616;letter-spacing:0.186px;">LotClosed</span><div class="a" style="left:912.60px;top:813.93px;width:16.00px;height:1.50px;background-image:repeating-linear-gradient(to right,#a4a4a4 0,#a4a4a4 1.4px,transparent 1.4px,transparent 3.5px);"></div><svg class="a" style="left:929.80px;top:799.78px;" width="28.10" height="24.20" viewBox="0 0 28.1 24.2"><rect x="0" y="0" width="28.1" height="24.2" rx="3" fill="#373737"/><rect x="5.35" y="3.50" width="7.20" height="18.75" fill="#a6d2ef"/><rect x="2.05" y="3.50" width="3.6" height="3.6" fill="#fff"/><rect x="7.15" y="3.50" width="3.6" height="3.6" fill="#3a9ad9"/><rect x="12.25" y="3.50" width="3.6" height="3.6" fill="#fff"/><rect x="17.35" y="3.50" width="3.6" height="3.6" fill="#fff"/><rect x="22.45" y="3.50" width="3.6" height="3.6" fill="#fff"/><rect x="2.05" y="8.55" width="3.6" height="3.6" fill="#fff"/><rect x="7.15" y="8.55" width="3.6" height="3.6" fill="#3a9ad9"/><rect x="12.25" y="8.55" width="3.6" height="3.6" fill="#fff"/><rect x="17.35" y="8.55" width="3.6" height="3.6" fill="#fff"/><rect x="22.45" y="8.55" width="3.6" height="3.6" fill="#fff"/><rect x="2.05" y="13.60" width="3.6" height="3.6" fill="#fff"/><rect x="7.15" y="13.60" width="3.6" height="3.6" fill="#3a9ad9"/><rect x="12.25" y="13.60" width="3.6" height="3.6" fill="#fff"/><rect x="17.35" y="13.60" width="3.6" height="3.6" fill="#fff"/><rect x="22.45" y="13.60" width="3.6" height="3.6" fill="#fff"/><rect x="2.05" y="18.65" width="3.6" height="3.6" fill="#fff"/><rect x="7.15" y="18.65" width="3.6" height="3.6" fill="#3a9ad9"/><rect x="12.25" y="18.65" width="3.6" height="3.6" fill="#fff"/><rect x="17.35" y="18.65" width="3.6" height="3.6" fill="#fff"/><rect x="22.45" y="18.65" width="3.6" height="3.6" fill="#fff"/></svg><span class="t" style="left:964.20px;top:801.33px;font-size:20.5px;line-height:20.5px;color:#161616;letter-spacing:0.822px;">LotNumber</span><div class="a" style="left:912.60px;top:845.45px;width:16.00px;height:1.50px;background-image:repeating-linear-gradient(to right,#a4a4a4 0,#a4a4a4 1.4px,transparent 1.4px,transparent 3.5px);"></div><svg class="a" style="left:929.80px;top:831.30px;" width="28.10" height="24.20" viewBox="0 0 28.1 24.2"><rect x="0" y="0" width="28.1" height="24.2" rx="3" fill="#373737"/><rect x="5.35" y="3.50" width="7.20" height="18.75" fill="#a6d2ef"/><rect x="2.05" y="3.50" width="3.6" height="3.6" fill="#fff"/><rect x="7.15" y="3.50" width="3.6" height="3.6" fill="#3a9ad9"/><rect x="12.25" y="3.50" width="3.6" height="3.6" fill="#fff"/><rect x="17.35" y="3.50" width="3.6" height="3.6" fill="#fff"/><rect x="22.45" y="3.50" width="3.6" height="3.6" fill="#fff"/><rect x="2.05" y="8.55" width="3.6" height="3.6" fill="#fff"/><rect x="7.15" y="8.55" width="3.6" height="3.6" fill="#3a9ad9"/><rect x="12.25" y="8.55" width="3.6" height="3.6" fill="#fff"/><rect x="17.35" y="8.55" width="3.6" height="3.6" fill="#fff"/><rect x="22.45" y="8.55" width="3.6" height="3.6" fill="#fff"/><rect x="2.05" y="13.60" width="3.6" height="3.6" fill="#fff"/><rect x="7.15" y="13.60" width="3.6" height="3.6" fill="#3a9ad9"/><rect x="12.25" y="13.60" width="3.6" height="3.6" fill="#fff"/><rect x="17.35" y="13.60" width="3.6" height="3.6" fill="#fff"/><rect x="22.45" y="13.60" width="3.6" height="3.6" fill="#fff"/><rect x="2.05" y="18.65" width="3.6" height="3.6" fill="#fff"/><rect x="7.15" y="18.65" width="3.6" height="3.6" fill="#3a9ad9"/><rect x="12.25" y="18.65" width="3.6" height="3.6" fill="#fff"/><rect x="17.35" y="18.65" width="3.6" height="3.6" fill="#fff"/><rect x="22.45" y="18.65" width="3.6" height="3.6" fill="#fff"/></svg><div class="a" style="left:961.40px;top:826.00px;width:85.60px;height:31.40px;background:#3f9ad7;box-sizing:border-box;border:1.6px dotted #8a4a1c;"></div><span class="t" style="left:964.20px;top:832.85px;font-size:20.5px;line-height:20.5px;color:#fff;letter-spacing:0.628px;">OnHand</span><div class="a" style="left:912.60px;top:876.97px;width:16.00px;height:1.50px;background-image:repeating-linear-gradient(to right,#a4a4a4 0,#a4a4a4 1.4px,transparent 1.4px,transparent 3.5px);"></div><svg class="a" style="left:929.80px;top:862.82px;" width="28.10" height="24.20" viewBox="0 0 28.1 24.2"><rect x="0" y="0" width="28.1" height="24.2" rx="3" fill="#373737"/><rect x="5.35" y="3.50" width="7.20" height="18.75" fill="#a6d2ef"/><rect x="2.05" y="3.50" width="3.6" height="3.6" fill="#fff"/><rect x="7.15" y="3.50" width="3.6" height="3.6" fill="#3a9ad9"/><rect x="12.25" y="3.50" width="3.6" height="3.6" fill="#fff"/><rect x="17.35" y="3.50" width="3.6" height="3.6" fill="#fff"/><rect x="22.45" y="3.50" width="3.6" height="3.6" fill="#fff"/><rect x="2.05" y="8.55" width="3.6" height="3.6" fill="#fff"/><rect x="7.15" y="8.55" width="3.6" height="3.6" fill="#3a9ad9"/><rect x="12.25" y="8.55" width="3.6" height="3.6" fill="#fff"/><rect x="17.35" y="8.55" width="3.6" height="3.6" fill="#fff"/><rect x="22.45" y="8.55" width="3.6" height="3.6" fill="#fff"/><rect x="2.05" y="13.60" width="3.6" height="3.6" fill="#fff"/><rect x="7.15" y="13.60" width="3.6" height="3.6" fill="#3a9ad9"/><rect x="12.25" y="13.60" width="3.6" height="3.6" fill="#fff"/><rect x="17.35" y="13.60" width="3.6" height="3.6" fill="#fff"/><rect x="22.45" y="13.60" width="3.6" height="3.6" fill="#fff"/><rect x="2.05" y="18.65" width="3.6" height="3.6" fill="#fff"/><rect x="7.15" y="18.65" width="3.6" height="3.6" fill="#3a9ad9"/><rect x="12.25" y="18.65" width="3.6" height="3.6" fill="#fff"/><rect x="17.35" y="18.65" width="3.6" height="3.6" fill="#fff"/><rect x="22.45" y="18.65" width="3.6" height="3.6" fill="#fff"/></svg><span class="t" style="left:964.20px;top:864.37px;font-size:20.5px;line-height:20.5px;color:#161616;letter-spacing:0.355px;">POLineNumber</span><div class="a" style="left:912.60px;top:908.49px;width:16.00px;height:1.50px;background-image:repeating-linear-gradient(to right,#a4a4a4 0,#a4a4a4 1.4px,transparent 1.4px,transparent 3.5px);"></div><div class="a" style="left:929.7px;top:894.34px;width:29px;height:22.26px;overflow:hidden"><svg class="a" style="left:0.00px;top:0.00px;" width="28.10" height="24.20" viewBox="0 0 28.1 24.2"><rect x="0" y="0" width="28.1" height="24.2" rx="3" fill="#373737"/><rect x="5.35" y="3.50" width="7.20" height="18.75" fill="#a6d2ef"/><rect x="2.05" y="3.50" width="3.6" height="3.6" fill="#fff"/><rect x="7.15" y="3.50" width="3.6" height="3.6" fill="#3a9ad9"/><rect x="12.25" y="3.50" width="3.6" height="3.6" fill="#fff"/><rect x="17.35" y="3.50" width="3.6" height="3.6" fill="#fff"/><rect x="22.45" y="3.50" width="3.6" height="3.6" fill="#fff"/><rect x="2.05" y="8.55" width="3.6" height="3.6" fill="#fff"/><rect x="7.15" y="8.55" width="3.6" height="3.6" fill="#3a9ad9"/><rect x="12.25" y="8.55" width="3.6" height="3.6" fill="#fff"/><rect x="17.35" y="8.55" width="3.6" height="3.6" fill="#fff"/><rect x="22.45" y="8.55" width="3.6" height="3.6" fill="#fff"/><rect x="2.05" y="13.60" width="3.6" height="3.6" fill="#fff"/><rect x="7.15" y="13.60" width="3.6" height="3.6" fill="#3a9ad9"/><rect x="12.25" y="13.60" width="3.6" height="3.6" fill="#fff"/><rect x="17.35" y="13.60" width="3.6" height="3.6" fill="#fff"/><rect x="22.45" y="13.60" width="3.6" height="3.6" fill="#fff"/><rect x="2.05" y="18.65" width="3.6" height="3.6" fill="#fff"/><rect x="7.15" y="18.65" width="3.6" height="3.6" fill="#3a9ad9"/><rect x="12.25" y="18.65" width="3.6" height="3.6" fill="#fff"/><rect x="17.35" y="18.65" width="3.6" height="3.6" fill="#fff"/><rect x="22.45" y="18.65" width="3.6" height="3.6" fill="#fff"/></svg></div><span class="t" style="left:964.20px;top:895.89px;font-size:20.5px;line-height:20.5px;color:#161616;letter-spacing:0.553px;">PONumber</span><div class="a" style="left:826.20px;top:916.40px;width:428.20px;height:54.80px;background:#fafafa;box-sizing:border-box;border-top:1.6px solid #a3a3a3;"></div><div class="a" style="left:1223.80px;top:511.00px;width:29.60px;height:405.40px;background:#f0f0f0;"></div><div class="a" style="left:1224.40px;top:556.80px;width:25.60px;height:142.80px;background:#cdcdcd;"></div><svg class="a" style="left:1230.20px;top:523.20px;" width="13.20" height="11.00" viewBox="0 0 13.2 11"><polygon points="0.00,10.00 0.90,11.00 3.50,11.00 6.60,6.10 9.70,11.00 12.30,11.00 13.20,10.00 6.60,0.00" fill="#000"/></svg><svg class="a" style="left:1230.20px;top:894.40px;" width="13.20" height="11.00" viewBox="0 0 13.2 11"><polygon points="0.00,1.00 0.90,0.00 3.50,0.00 6.60,4.90 9.70,0.00 12.30,0.00 13.20,1.00 6.60,11.00" fill="#000"/></svg><div class="a" style="left:1230.80px;top:621.60px;width:11.80px;height:2.50px;background:#595959;"></div><div class="a" style="left:1230.80px;top:627.20px;width:11.80px;height:2.50px;background:#595959;"></div><div class="a" style="left:1230.80px;top:632.80px;width:11.80px;height:2.50px;background:#595959;"></div><div class="a" style="left:1253.40px;top:509.60px;width:1.20px;height:461.60px;background:#fdfdfd;"></div><div class="a" style="left:1012.20px;top:924.20px;width:106.20px;height:40.00px;background:#f8f8f8;box-sizing:border-box;border:2.4px solid #a9a9a9;"></div><div class="a" style="left:1134.40px;top:924.20px;width:106.60px;height:40.00px;background:#fafafa;box-sizing:border-box;border:1.3px solid #a9a9a9;"></div><span class="t" style="left:1037.40px;top:934.45px;font-size:20.5px;line-height:20.5px;color:#161616;letter-spacing:-0.197px;">Select</span><span class="t" style="left:1155.40px;top:934.45px;font-size:20.5px;line-height:20.5px;color:#161616;letter-spacing:-0.083px;">Cancel</span><svg class="a" style="left:0;top:0;pointer-events:none" width="1547" height="1026" viewBox="0 0 1547 1026"><g fill="#21a038" stroke="none"><path d="M655.3 601.7L769.6 438.6" stroke="#21a038" stroke-width="7.4" fill="none"/><path d="M783.1 419.2L759.7 431.9L778.2 444.8Z"/><path d="M797.3 412L916.6 816" stroke="#21a038" stroke-width="8" fill="none"/><path d="M922.9 837.5L904.8 818.5L927.7 812.1Z"/></g></svg>
</body></html>
